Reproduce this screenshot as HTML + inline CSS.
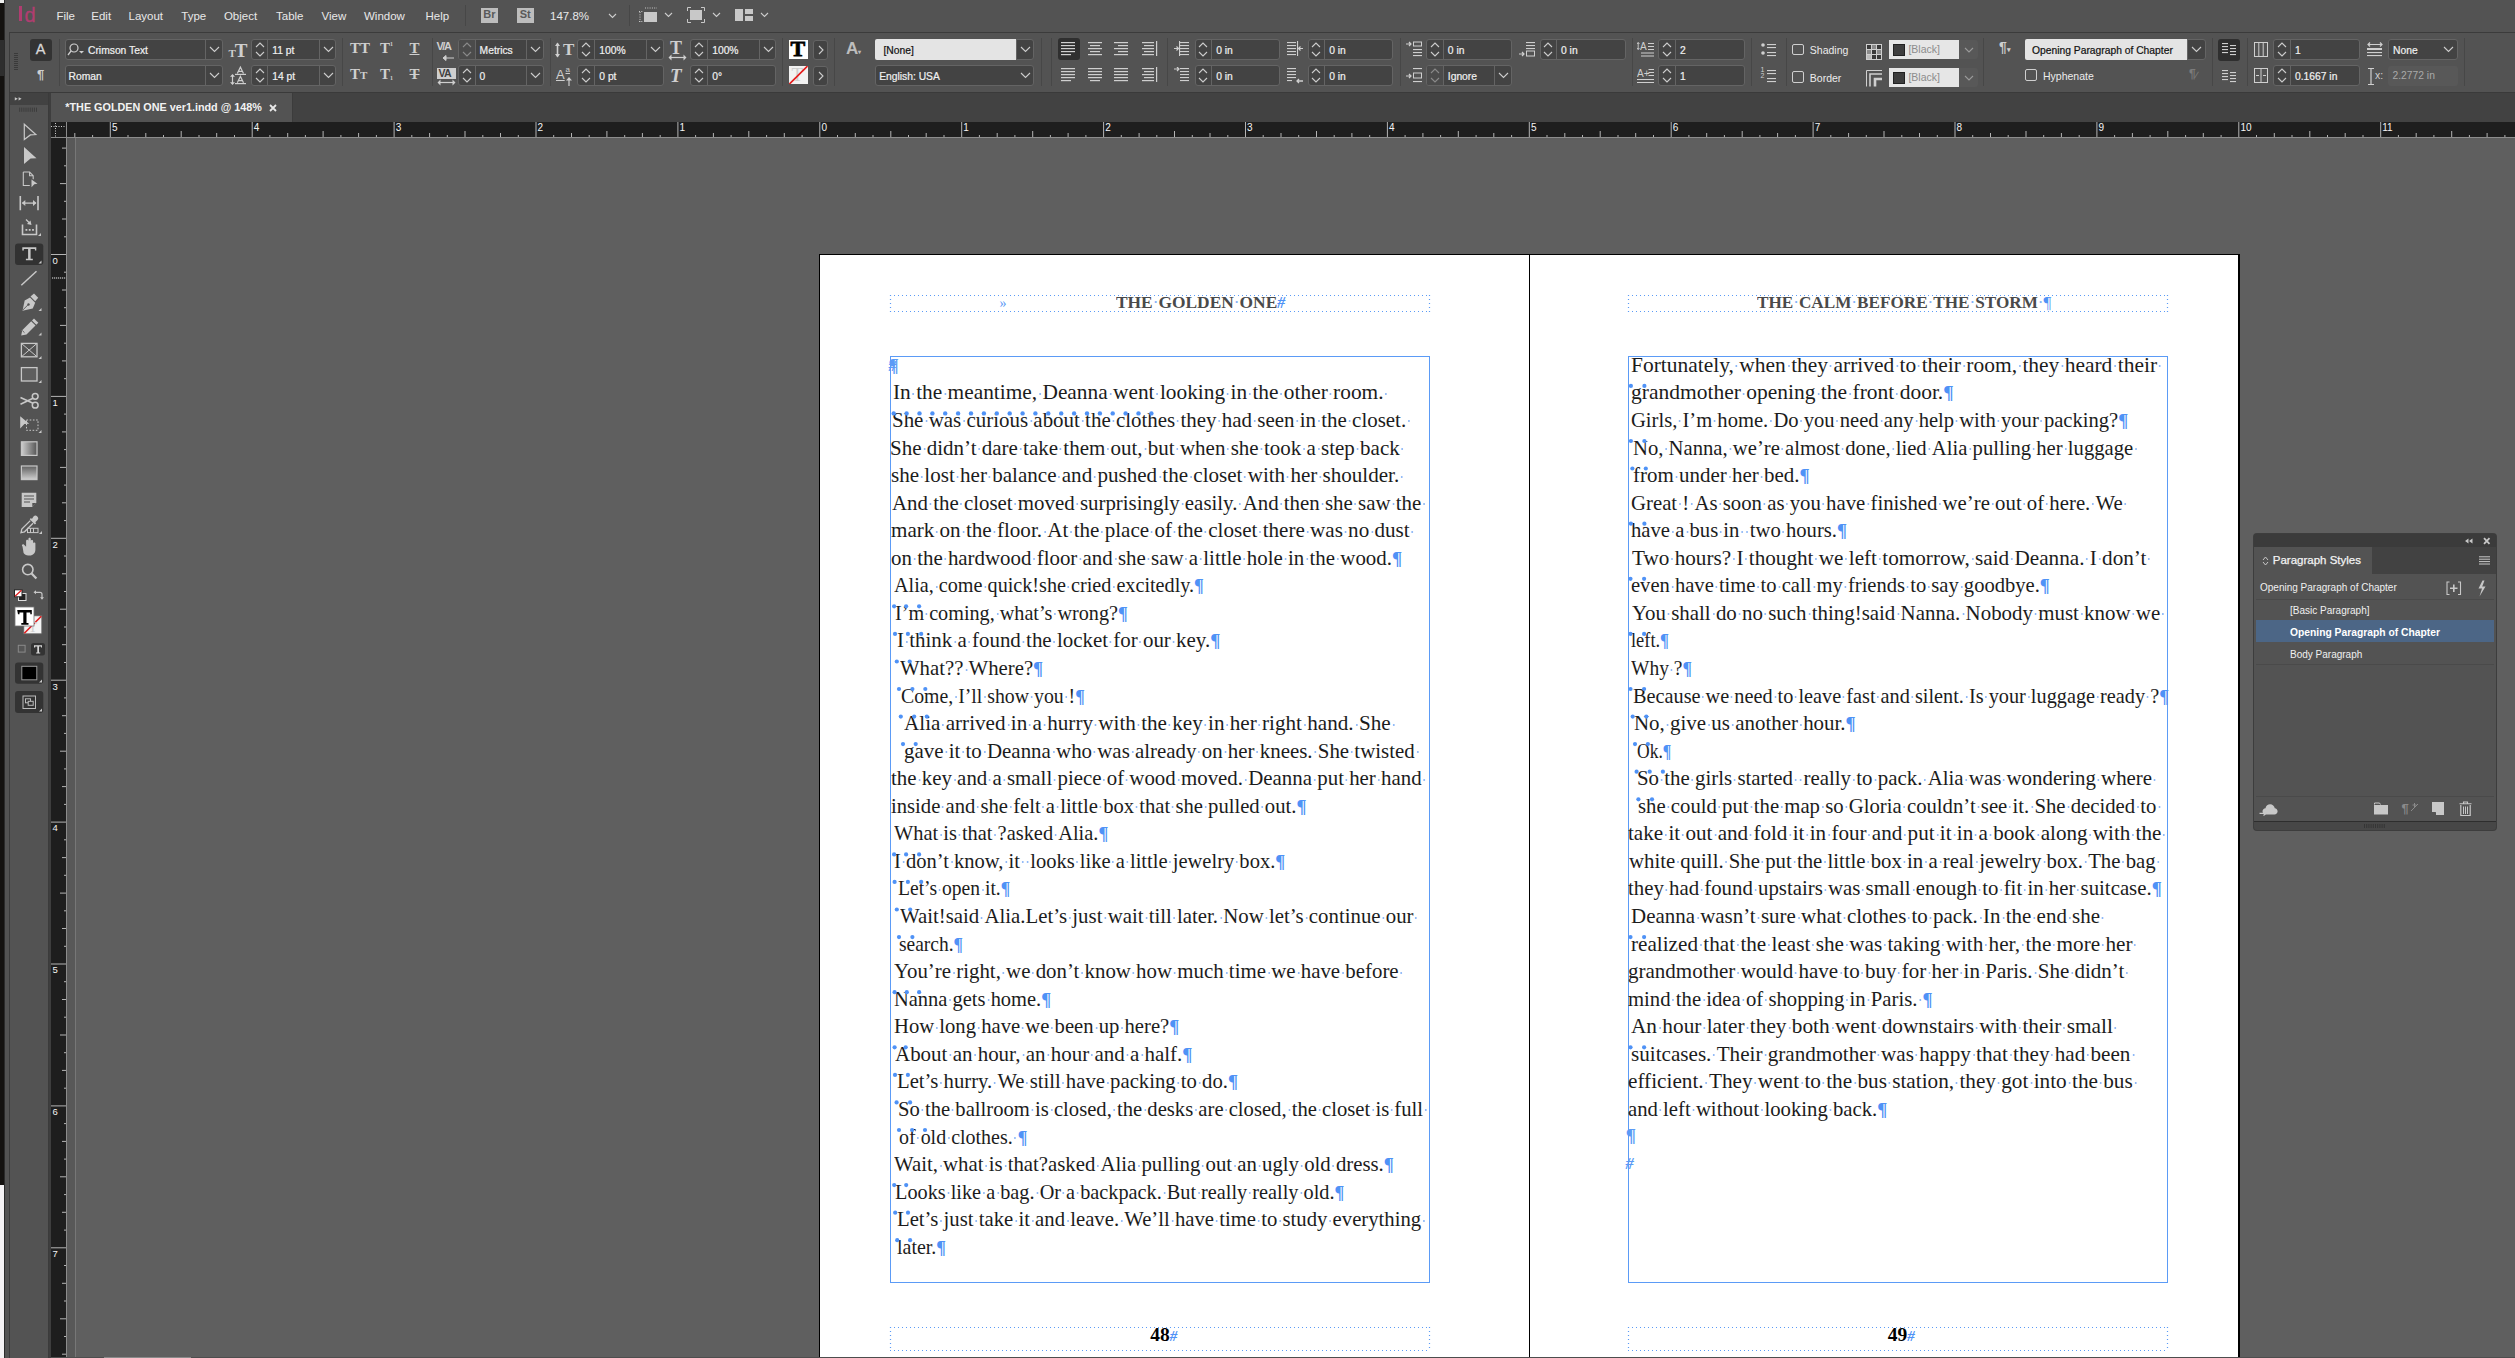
<!DOCTYPE html><html><head><meta charset="utf-8"><style>
*{margin:0;padding:0;box-sizing:border-box}
html,body{width:2515px;height:1358px;overflow:hidden}
body{position:relative;background:#535353;font-family:"Liberation Sans",sans-serif;}
.a{position:absolute}
.t{white-space:pre;line-height:1}
.ln{position:absolute;white-space:pre;font-family:"Liberation Serif",serif;font-size:21.2px;line-height:1;color:#1c1c1c;transform-origin:0 0}
.ln i{font-style:normal;position:relative}
.ln i::after{content:'';position:absolute;left:1.8px;top:12.5px;width:2px;height:2px;background:#86b3f6;border-radius:1px}
.ln b.p{font-weight:bold;color:#4f92f6;font-size:19px}
.hd i{font-style:normal;font-weight:normal;color:#7fb0f7}
.hs{color:#4f92f6;font-style:italic;font-weight:bold;font-size:16px}
.hs2{color:#4f92f6;font-style:italic;font-weight:bold;font-size:15px;vertical-align:0px}
.hp{color:#4f92f6;font-weight:normal}
</style></head><body>
<div class="a" style="left:0px;top:0px;width:5px;height:1358px;background:#141210"></div>
<div class="a" style="left:0px;top:0px;width:6px;height:3px;background:#f0f0f0"></div>
<div class="a" style="left:0px;top:40px;width:4px;height:36px;background:#2e2e2e"></div>
<div class="a" style="left:0px;top:1185px;width:4px;height:173px;background:#f4f2f4"></div>
<div class="a" style="left:4px;top:0px;width:1px;height:1358px;background:#2b2b2b"></div>
<div class="a" style="left:5px;top:0px;width:2510px;height:1358px;background:#535353"></div>
<div class="a" style="left:9px;top:32px;width:2506px;height:60px;background:#535353;border-top:1px solid #3b3b3b;border-left:1px solid #3b3b3b"></div>
<div class="a" style="left:18.9px;top:6px;width:3px;height:15.2px;background:#b03d70"></div>
<div class="a t" style="left:24.6px;top:4.6px;font-size:20px;color:#b03d70;-webkit-text-stroke:0.3px #b03d70">d</div>
<div class="a t" style="left:56.4px;top:10.5px;font-size:11.5px;color:#e8e8e8">File</div>
<div class="a t" style="left:91.3px;top:10.5px;font-size:11.5px;color:#e8e8e8">Edit</div>
<div class="a t" style="left:128.5px;top:10.5px;font-size:11.5px;color:#e8e8e8">Layout</div>
<div class="a t" style="left:181.3px;top:10.5px;font-size:11.5px;color:#e8e8e8">Type</div>
<div class="a t" style="left:223.9px;top:10.5px;font-size:11.5px;color:#e8e8e8">Object</div>
<div class="a t" style="left:276px;top:10.5px;font-size:11.5px;color:#e8e8e8">Table</div>
<div class="a t" style="left:321.5px;top:10.5px;font-size:11.5px;color:#e8e8e8">View</div>
<div class="a t" style="left:364px;top:10.5px;font-size:11.5px;color:#e8e8e8">Window</div>
<div class="a t" style="left:425.5px;top:10.5px;font-size:11.5px;color:#e8e8e8">Help</div>
<div class="a" style="left:464.5px;top:5px;width:1px;height:21px;background:#474747"></div>
<div class="a" style="left:481px;top:7.5px;width:16.5px;height:15.5px;background:#bdbdbd"></div>
<div class="a t" style="left:483.2px;top:9px;font-size:11px;font-weight:bold;color:#5a5a5a">Br</div>
<div class="a" style="left:517px;top:7.5px;width:16.5px;height:15.5px;background:#bdbdbd"></div>
<div class="a t" style="left:519.7px;top:9px;font-size:11px;font-weight:bold;color:#5a5a5a">St</div>
<div class="a t" style="left:550px;top:10.5px;font-size:11.5px;color:#e8e8e8">147.8%</div>
<svg class="a" style="left:608.2px;top:13.25px;" width="9" height="5.5" viewBox="0 0 9 5.5"><polyline points="1,1 4.5,4.5 8,1" fill="none" stroke="#cdcdcd" stroke-width="1.1"/></svg>
<div class="a" style="left:628.5px;top:5px;width:1px;height:21px;background:#474747"></div>
<svg class="a" style="left:638px;top:7px;" width="22" height="16" viewBox="0 0 22 16"><g fill="#c8c8c8"><rect x="6" y="5" width="13" height="10"/></g><g stroke="#c8c8c8" stroke-width="1" stroke-dasharray="1,1.3"><line x1="1" y1="4.5" x2="5" y2="4.5"/><line x1="1" y1="14.5" x2="5" y2="14.5"/><line x1="2" y1="5" x2="2" y2="15"/><line x1="7" y1="1" x2="19" y2="1"/></g></svg>
<svg class="a" style="left:664.3px;top:12.25px;" width="9" height="5.5" viewBox="0 0 9 5.5"><polyline points="1,1 4.5,4.5 8,1" fill="none" stroke="#cdcdcd" stroke-width="1.1"/></svg>
<svg class="a" style="left:687px;top:7px;" width="18" height="16" viewBox="0 0 18 16"><rect x="3" y="3" width="12" height="10" fill="#c8c8c8"/><path d="M0.5 4V0.5H4M14 0.5H17.5V4M17.5 12V15.5H14M4 15.5H0.5V12" fill="none" stroke="#c8c8c8" stroke-width="1"/></svg>
<svg class="a" style="left:711.8px;top:12.25px;" width="9" height="5.5" viewBox="0 0 9 5.5"><polyline points="1,1 4.5,4.5 8,1" fill="none" stroke="#cdcdcd" stroke-width="1.1"/></svg>
<svg class="a" style="left:735px;top:8px;" width="18" height="14" viewBox="0 0 18 14"><rect x="0" y="1" width="8" height="12" fill="#c8c8c8"/><rect x="10" y="1" width="8" height="5" fill="#c8c8c8"/><rect x="10" y="8" width="8" height="5" fill="#c8c8c8"/></svg>
<svg class="a" style="left:759.8px;top:12.25px;" width="9" height="5.5" viewBox="0 0 9 5.5"><polyline points="1,1 4.5,4.5 8,1" fill="none" stroke="#cdcdcd" stroke-width="1.1"/></svg>
<div class="a" style="left:14px;top:53.0px;width:4px;height:1px;background:#3a3a3a"></div>
<div class="a" style="left:14px;top:55.0px;width:4px;height:1px;background:#3a3a3a"></div>
<div class="a" style="left:14px;top:57.0px;width:4px;height:1px;background:#3a3a3a"></div>
<div class="a" style="left:14px;top:59.0px;width:4px;height:1px;background:#3a3a3a"></div>
<div class="a" style="left:14px;top:61.0px;width:4px;height:1px;background:#3a3a3a"></div>
<div class="a" style="left:14px;top:63.0px;width:4px;height:1px;background:#3a3a3a"></div>
<div class="a" style="left:14px;top:65.0px;width:4px;height:1px;background:#3a3a3a"></div>
<div class="a" style="left:14px;top:67.0px;width:4px;height:1px;background:#3a3a3a"></div>
<div class="a" style="left:14px;top:69.0px;width:4px;height:1px;background:#3a3a3a"></div>
<div class="a" style="left:30px;top:39px;width:22px;height:22px;background:#333333;border-radius:3px"></div>
<div class="a t" style="left:35.8px;top:42px;font-size:14.5px;color:#d8d8d8;-webkit-text-stroke:0.3px #d8d8d8">A</div>
<div class="a t" style="left:37px;top:68px;font-size:13px;color:#cfcfcf;font-weight:bold">¶</div>
<div class="a" style="left:58.5px;top:39px;width:1px;height:47px;background:#474747"></div>
<div class="a" style="left:64.6px;top:39.4px;width:158.70000000000002px;height:20.300000000000004px;background:#434343;border:1px solid #646464;border-radius:3px"></div>
<div class="a" style="left:205px;top:39.4px;width:1px;height:20.300000000000004px;background:#646464"></div>
<svg class="a" style="left:209.15px;top:46.3px;" width="11" height="6.5" viewBox="0 0 11 6.5"><polyline points="1,1 5.5,5.5 10,1" fill="none" stroke="#cdcdcd" stroke-width="1.1"/></svg>
<div class="a t" style="left:88px;top:45.8px;font-size:10.3px;color:#f0f0f0;-webkit-text-stroke:0.2px #f0f0f0">Crimson Text</div>
<svg class="a" style="left:67px;top:42px;" width="18" height="16" viewBox="0 0 18 16"><circle cx="7" cy="6" r="4" fill="none" stroke="#cfcfcf" stroke-width="1.2"/><line x1="4" y1="9" x2="1" y2="13" stroke="#cfcfcf" stroke-width="1.3"/><path d="M12 9h5l-2.5 2.5z" fill="#cfcfcf"/></svg>
<div class="a" style="left:64.6px;top:65.3px;width:158.70000000000002px;height:20.5px;background:#434343;border:1px solid #646464;border-radius:3px"></div>
<div class="a" style="left:205px;top:65.3px;width:1px;height:20.5px;background:#646464"></div>
<svg class="a" style="left:209.15px;top:72.3px;" width="11" height="6.5" viewBox="0 0 11 6.5"><polyline points="1,1 5.5,5.5 10,1" fill="none" stroke="#cdcdcd" stroke-width="1.1"/></svg>
<div class="a t" style="left:68.5px;top:71.8px;font-size:10.3px;color:#f0f0f0;-webkit-text-stroke:0.2px #f0f0f0">Roman</div>
<div class="a t" style="left:228.5px;top:40.5px;font-family:'Liberation Serif';font-weight:bold;font-size:19px;color:#cfcfcf;letter-spacing:-1px"><span style="font-size:11px">T</span>T</div>
<div class="a" style="left:250.8px;top:39.4px;width:85.69999999999999px;height:20.300000000000004px;background:#434343;border:1px solid #646464;border-radius:3px"></div>
<div class="a" style="left:267.3px;top:39.4px;width:1px;height:20.300000000000004px;background:#646464"></div>
<svg class="a" style="left:254.55px;top:42.49px;" width="10" height="6.0" viewBox="0 0 10 6.0"><polyline points="1,5.0 5.0,1 9,5.0" fill="none" stroke="#cdcdcd" stroke-width="1.1"/></svg>
<svg class="a" style="left:254.55px;top:51.016000000000005px;" width="10" height="6.0" viewBox="0 0 10 6.0"><polyline points="1,1 5.0,5.0 9,1" fill="none" stroke="#cdcdcd" stroke-width="1.1"/></svg>
<div class="a" style="left:318.7px;top:39.4px;width:1px;height:20.300000000000004px;background:#646464"></div>
<svg class="a" style="left:322.6px;top:46.3px;" width="11" height="6.5" viewBox="0 0 11 6.5"><polyline points="1,1 5.5,5.5 10,1" fill="none" stroke="#cdcdcd" stroke-width="1.1"/></svg>
<div class="a t" style="left:272.3px;top:45.8px;font-size:10.3px;color:#f0f0f0;-webkit-text-stroke:0.2px #f0f0f0">11 pt</div>
<svg class="a" style="left:228px;top:64px;" width="22" height="24" viewBox="0 0 22 24"><g stroke="#cfcfcf" fill="none" stroke-width="1.2"><path d="M4.5 11.5v8"/><path d="M9.3 9.4L12.4 3.2L15.5 9.4M10.4 7.3h4"/><path d="M7 10.4h11"/><path d="M9.3 18.8L12.4 12.4L15.5 18.8M10.4 16.6h4"/><path d="M7 19.6h11"/></g><path d="M2 12.7L4.5 10L7 12.7zM2 18.3L4.5 21L7 18.3z" fill="#cfcfcf"/></svg>
<div class="a" style="left:250.8px;top:65.3px;width:85.69999999999999px;height:20.5px;background:#434343;border:1px solid #646464;border-radius:3px"></div>
<div class="a" style="left:267.3px;top:65.3px;width:1px;height:20.5px;background:#646464"></div>
<svg class="a" style="left:254.55px;top:68.45px;" width="10" height="6.0" viewBox="0 0 10 6.0"><polyline points="1,5.0 5.0,1 9,5.0" fill="none" stroke="#cdcdcd" stroke-width="1.1"/></svg>
<svg class="a" style="left:254.55px;top:77.06px;" width="10" height="6.0" viewBox="0 0 10 6.0"><polyline points="1,1 5.0,5.0 9,1" fill="none" stroke="#cdcdcd" stroke-width="1.1"/></svg>
<div class="a" style="left:318.7px;top:65.3px;width:1px;height:20.5px;background:#646464"></div>
<svg class="a" style="left:322.6px;top:72.3px;" width="11" height="6.5" viewBox="0 0 11 6.5"><polyline points="1,1 5.5,5.5 10,1" fill="none" stroke="#cdcdcd" stroke-width="1.1"/></svg>
<div class="a t" style="left:272.3px;top:71.8px;font-size:10.3px;color:#f0f0f0;-webkit-text-stroke:0.2px #f0f0f0">14 pt</div>
<div class="a" style="left:342.3px;top:38px;width:1px;height:48px;background:#474747"></div>
<div class="a t" style="left:350px;top:41px;font-family:'Liberation Serif';font-size:15px;font-weight:bold;color:#cfcfcf">TT</div>
<div class="a t" style="left:380px;top:41px;font-family:'Liberation Serif';font-size:15px;font-weight:bold;color:#cfcfcf">T<sup style="font-size:6px;vertical-align:7px">1</sup></div>
<div class="a t" style="left:409.5px;top:41px;font-family:'Liberation Serif';font-size:15px;font-weight:bold;color:#cfcfcf"><u>T</u></div>
<div class="a t" style="left:350px;top:67px;font-family:'Liberation Serif';font-size:15px;font-weight:bold;color:#cfcfcf">T<span style="font-size:11px">T</span></div>
<div class="a t" style="left:380px;top:67px;font-family:'Liberation Serif';font-size:15px;font-weight:bold;color:#cfcfcf">T<sub style="font-size:6px;vertical-align:-1px">1</sub></div>
<div class="a t" style="left:409.5px;top:67px;font-family:'Liberation Serif';font-size:15px;font-weight:bold;color:#cfcfcf"><s>T</s></div>
<div class="a" style="left:431.6px;top:38px;width:1px;height:48px;background:#474747"></div>
<div class="a t" style="left:436.5px;top:41px;font-size:11px;color:#cfcfcf;letter-spacing:-1.5px;font-weight:bold">V/A</div>
<svg class="a" style="left:443px;top:55px;" width="12" height="6" viewBox="0 0 12 6"><path d="M0 3l3-2.5v5z M2 3h9" fill="#cfcfcf" stroke="#cfcfcf" stroke-width="1"/></svg>
<div class="a" style="left:458.2px;top:39.4px;width:86.30000000000001px;height:20.300000000000004px;background:#434343;border:1px solid #646464;border-radius:3px"></div>
<div class="a" style="left:459.2px;top:40.4px;width:15.400000000000034px;height:18.300000000000004px;background:#4b4b4b;border-radius:2px 0 0 2px"></div>
<div class="a" style="left:474.6px;top:39.4px;width:1px;height:20.300000000000004px;background:#646464"></div>
<svg class="a" style="left:461.9px;top:42.49px;" width="10" height="6.0" viewBox="0 0 10 6.0"><polyline points="1,5.0 5.0,1 9,5.0" fill="none" stroke="#8a8a8a" stroke-width="1.1"/></svg>
<svg class="a" style="left:461.9px;top:51.016000000000005px;" width="10" height="6.0" viewBox="0 0 10 6.0"><polyline points="1,1 5.0,5.0 9,1" fill="none" stroke="#8a8a8a" stroke-width="1.1"/></svg>
<div class="a" style="left:526px;top:39.4px;width:1px;height:20.300000000000004px;background:#646464"></div>
<svg class="a" style="left:530.25px;top:46.3px;" width="11" height="6.5" viewBox="0 0 11 6.5"><polyline points="1,1 5.5,5.5 10,1" fill="none" stroke="#cdcdcd" stroke-width="1.1"/></svg>
<div class="a t" style="left:479.6px;top:45.8px;font-size:10.3px;color:#f0f0f0;-webkit-text-stroke:0.2px #f0f0f0">Metrics</div>
<div class="a" style="left:437px;top:68px;width:19px;height:11px;background:#cfcfcf"></div>
<div class="a t" style="left:438.5px;top:67.5px;font-size:10.5px;color:#3f3f3f;font-weight:bold;letter-spacing:-0.8px">VA</div>
<svg class="a" style="left:437px;top:79px;" width="19" height="7" viewBox="0 0 19 7"><path d="M0.5 3.5l3-3v6z M18.5 3.5l-3-3v6z" fill="#cfcfcf"/><line x1="2" y1="3.5" x2="17" y2="3.5" stroke="#cfcfcf" stroke-width="1.2"/></svg>
<div class="a" style="left:458.2px;top:65.3px;width:86.30000000000001px;height:20.5px;background:#434343;border:1px solid #646464;border-radius:3px"></div>
<div class="a" style="left:474.6px;top:65.3px;width:1px;height:20.5px;background:#646464"></div>
<svg class="a" style="left:461.9px;top:68.45px;" width="10" height="6.0" viewBox="0 0 10 6.0"><polyline points="1,5.0 5.0,1 9,5.0" fill="none" stroke="#cdcdcd" stroke-width="1.1"/></svg>
<svg class="a" style="left:461.9px;top:77.06px;" width="10" height="6.0" viewBox="0 0 10 6.0"><polyline points="1,1 5.0,5.0 9,1" fill="none" stroke="#cdcdcd" stroke-width="1.1"/></svg>
<div class="a" style="left:526px;top:65.3px;width:1px;height:20.5px;background:#646464"></div>
<svg class="a" style="left:530.25px;top:72.3px;" width="11" height="6.5" viewBox="0 0 11 6.5"><polyline points="1,1 5.5,5.5 10,1" fill="none" stroke="#cdcdcd" stroke-width="1.1"/></svg>
<div class="a t" style="left:479.6px;top:71.8px;font-size:10.3px;color:#f0f0f0;-webkit-text-stroke:0.2px #f0f0f0">0</div>
<div class="a" style="left:550.2px;top:38px;width:1px;height:48px;background:#474747"></div>
<svg class="a" style="left:555px;top:42px;" width="20" height="17" viewBox="0 0 20 17"><path d="M2.5 1.5v13" stroke="#cfcfcf" stroke-width="1.6"/><path d="M0 4l2.5-3.5L5 4zM0 12l2.5 3.5L5 12z" fill="#cfcfcf"/></svg>
<div class="a t" style="left:563px;top:40.5px;font-family:'Liberation Serif';font-weight:bold;font-size:17px;color:#cfcfcf">T</div>
<div class="a" style="left:577.4px;top:39.4px;width:86.30000000000007px;height:20.300000000000004px;background:#434343;border:1px solid #646464;border-radius:3px"></div>
<div class="a" style="left:594.3px;top:39.4px;width:1px;height:20.300000000000004px;background:#646464"></div>
<svg class="a" style="left:581.3499999999999px;top:42.49px;" width="10" height="6.0" viewBox="0 0 10 6.0"><polyline points="1,5.0 5.0,1 9,5.0" fill="none" stroke="#cdcdcd" stroke-width="1.1"/></svg>
<svg class="a" style="left:581.3499999999999px;top:51.016000000000005px;" width="10" height="6.0" viewBox="0 0 10 6.0"><polyline points="1,1 5.0,5.0 9,1" fill="none" stroke="#cdcdcd" stroke-width="1.1"/></svg>
<div class="a" style="left:645.7px;top:39.4px;width:1px;height:20.300000000000004px;background:#646464"></div>
<svg class="a" style="left:649.7px;top:46.3px;" width="11" height="6.5" viewBox="0 0 11 6.5"><polyline points="1,1 5.5,5.5 10,1" fill="none" stroke="#cdcdcd" stroke-width="1.1"/></svg>
<div class="a t" style="left:599.3px;top:45.8px;font-size:10.3px;color:#f0f0f0;-webkit-text-stroke:0.2px #f0f0f0">100%</div>
<div class="a t" style="left:556px;top:67.5px;font-size:13px;color:#cfcfcf"><u>A</u></div>
<div class="a t" style="left:565.5px;top:66px;font-size:8px;color:#cfcfcf"><u>a</u></div>
<svg class="a" style="left:565px;top:76px;" width="8" height="10" viewBox="0 0 8 10"><path d="M4 2v8" stroke="#cfcfcf" stroke-width="1.2"/><path d="M1 4.5l3-3.5 3 3.5z" fill="#cfcfcf"/></svg>
<div class="a" style="left:577.4px;top:65.3px;width:86.30000000000007px;height:20.5px;background:#434343;border:1px solid #646464;border-radius:3px"></div>
<div class="a" style="left:594.3px;top:65.3px;width:1px;height:20.5px;background:#646464"></div>
<svg class="a" style="left:581.3499999999999px;top:68.45px;" width="10" height="6.0" viewBox="0 0 10 6.0"><polyline points="1,5.0 5.0,1 9,5.0" fill="none" stroke="#cdcdcd" stroke-width="1.1"/></svg>
<svg class="a" style="left:581.3499999999999px;top:77.06px;" width="10" height="6.0" viewBox="0 0 10 6.0"><polyline points="1,1 5.0,5.0 9,1" fill="none" stroke="#cdcdcd" stroke-width="1.1"/></svg>
<div class="a t" style="left:599.3px;top:71.8px;font-size:10.3px;color:#f0f0f0;-webkit-text-stroke:0.2px #f0f0f0">0 pt</div>
<div class="a t" style="left:670px;top:39px;font-family:'Liberation Serif';font-size:18px;color:#cfcfcf;font-weight:bold">T</div>
<svg class="a" style="left:668px;top:54px;" width="19" height="7" viewBox="0 0 19 7"><path d="M0.5 3.5l3-3v6z M18.5 3.5l-3-3v6z" fill="#cfcfcf"/><line x1="2" y1="3.5" x2="17" y2="3.5" stroke="#cfcfcf" stroke-width="1.2"/></svg>
<div class="a" style="left:690.3px;top:39.4px;width:86.10000000000002px;height:20.300000000000004px;background:#434343;border:1px solid #646464;border-radius:3px"></div>
<div class="a" style="left:707.2px;top:39.4px;width:1px;height:20.300000000000004px;background:#646464"></div>
<svg class="a" style="left:694.25px;top:42.49px;" width="10" height="6.0" viewBox="0 0 10 6.0"><polyline points="1,5.0 5.0,1 9,5.0" fill="none" stroke="#cdcdcd" stroke-width="1.1"/></svg>
<svg class="a" style="left:694.25px;top:51.016000000000005px;" width="10" height="6.0" viewBox="0 0 10 6.0"><polyline points="1,1 5.0,5.0 9,1" fill="none" stroke="#cdcdcd" stroke-width="1.1"/></svg>
<div class="a" style="left:758.6px;top:39.4px;width:1px;height:20.300000000000004px;background:#646464"></div>
<svg class="a" style="left:762.5px;top:46.3px;" width="11" height="6.5" viewBox="0 0 11 6.5"><polyline points="1,1 5.5,5.5 10,1" fill="none" stroke="#cdcdcd" stroke-width="1.1"/></svg>
<div class="a t" style="left:712.2px;top:45.8px;font-size:10.3px;color:#f0f0f0;-webkit-text-stroke:0.2px #f0f0f0">100%</div>
<div class="a t" style="left:670px;top:66px;font-family:'Liberation Serif';font-size:19px;color:#cfcfcf;font-weight:bold"><i>T</i></div>
<div class="a" style="left:690.3px;top:65.3px;width:86.10000000000002px;height:20.5px;background:#434343;border:1px solid #646464;border-radius:3px"></div>
<div class="a" style="left:707.2px;top:65.3px;width:1px;height:20.5px;background:#646464"></div>
<svg class="a" style="left:694.25px;top:68.45px;" width="10" height="6.0" viewBox="0 0 10 6.0"><polyline points="1,5.0 5.0,1 9,5.0" fill="none" stroke="#cdcdcd" stroke-width="1.1"/></svg>
<svg class="a" style="left:694.25px;top:77.06px;" width="10" height="6.0" viewBox="0 0 10 6.0"><polyline points="1,1 5.0,5.0 9,1" fill="none" stroke="#cdcdcd" stroke-width="1.1"/></svg>
<div class="a t" style="left:712.2px;top:71.8px;font-size:10.3px;color:#f0f0f0;-webkit-text-stroke:0.2px #f0f0f0">0°</div>
<div class="a" style="left:782.3px;top:38px;width:1px;height:48px;background:#474747"></div>
<div class="a" style="left:789px;top:39.8px;width:19px;height:19.5px;background:#fff"></div>
<div class="a t" style="left:790.5px;top:37.5px;font-family:'Liberation Serif';font-size:22px;font-weight:bold;color:#000;-webkit-text-stroke:0.8px #000">T</div>
<div class="a" style="left:812.7px;top:39.5px;width:15.5px;height:20px;background:#434343;border:1px solid #646464;border-radius:3px"></div>
<svg class="a" style="left:817.8px;top:44.5px;" width="6.0" height="10" viewBox="0 0 6.0 10"><polyline points="1,1 5.0,5.0 1,9" fill="none" stroke="#cdcdcd" stroke-width="1.1"/></svg>
<div class="a" style="left:789px;top:65.8px;width:18.5px;height:18.5px;background:#f2f2f2"></div>
<div class="a t" style="left:791.5px;top:64.5px;font-family:'Liberation Serif';font-size:19px;color:#cfcfcf">T</div>
<svg class="a" style="left:789px;top:65.8px;" width="18.5" height="18.5" viewBox="0 0 18.5 18.5"><line x1="0" y1="18.5" x2="18.5" y2="0" stroke="#e41b1b" stroke-width="1.6"/></svg>
<div class="a" style="left:812.7px;top:65.5px;width:15.5px;height:20px;background:#434343;border:1px solid #646464;border-radius:3px"></div>
<svg class="a" style="left:817.8px;top:70.5px;" width="6.0" height="10" viewBox="0 0 6.0 10"><polyline points="1,1 5.0,5.0 1,9" fill="none" stroke="#cdcdcd" stroke-width="1.1"/></svg>
<div class="a" style="left:834.3px;top:38px;width:1px;height:48px;background:#474747"></div>
<div class="a t" style="left:846px;top:40px;font-size:17px;font-weight:bold;color:#bdbdbd">A<span style="font-size:6px">▾</span></div>
<div class="a" style="left:875.4px;top:39.4px;width:158.89999999999998px;height:20.300000000000004px;background:#434343;border:1px solid #646464;border-radius:3px"></div>
<div class="a" style="left:875.4px;top:39.4px;width:140.60000000000002px;height:20.300000000000004px;background:#e4e4e4;border-radius:2px 0 0 2px"></div>
<div class="a" style="left:1016px;top:39.4px;width:1px;height:20.300000000000004px;background:#646464"></div>
<svg class="a" style="left:1020.1500000000001px;top:46.3px;" width="11" height="6.5" viewBox="0 0 11 6.5"><polyline points="1,1 5.5,5.5 10,1" fill="none" stroke="#cdcdcd" stroke-width="1.1"/></svg>
<div class="a t" style="left:883.5px;top:45.8px;font-size:10.3px;color:#111;-webkit-text-stroke:0.2px #111">[None]</div>
<div class="a" style="left:875.4px;top:65.3px;width:158.89999999999998px;height:20.5px;background:#434343;border:1px solid #646464;border-radius:3px"></div>
<div class="a t" style="left:879.2px;top:71.8px;font-size:10.3px;color:#f0f0f0;-webkit-text-stroke:0.2px #f0f0f0">English: USA</div>
<svg class="a" style="left:1020.0px;top:72.25px;" width="11" height="6.5" viewBox="0 0 11 6.5"><polyline points="1,1 5.5,5.5 10,1" fill="none" stroke="#cdcdcd" stroke-width="1.1"/></svg>
<div class="a" style="left:1040.6px;top:38px;width:1px;height:48px;background:#474747"></div>
<div class="a" style="left:1051.4px;top:38px;width:1px;height:48px;background:#474747"></div>
<div class="a" style="left:1058px;top:38.2px;width:21.5px;height:21.5px;background:#2f2f2f;border-radius:3px"></div>
<svg class="a" style="left:1060.7px;top:41px;" width="16" height="16" viewBox="0 0 16 16"><rect x="0" y="1" width="14" height="1.2" fill="#cfcfcf"/><rect x="0" y="4" width="14" height="1.2" fill="#cfcfcf"/><rect x="0" y="7" width="14" height="1.2" fill="#cfcfcf"/><rect x="0" y="10" width="14" height="1.2" fill="#cfcfcf"/><rect x="0" y="13" width="10" height="1.2" fill="#cfcfcf"/></svg>
<svg class="a" style="left:1087.8px;top:41px;" width="16" height="16" viewBox="0 0 16 16"><rect x="0.0" y="1" width="14" height="1.2" fill="#cfcfcf"/><rect x="2.0" y="4" width="10" height="1.2" fill="#cfcfcf"/><rect x="0.0" y="7" width="14" height="1.2" fill="#cfcfcf"/><rect x="2.0" y="10" width="10" height="1.2" fill="#cfcfcf"/><rect x="0.0" y="13" width="14" height="1.2" fill="#cfcfcf"/></svg>
<svg class="a" style="left:1114.1px;top:41px;" width="16" height="16" viewBox="0 0 16 16"><rect x="0" y="1" width="14" height="1.2" fill="#cfcfcf"/><rect x="4" y="4" width="10" height="1.2" fill="#cfcfcf"/><rect x="0" y="7" width="14" height="1.2" fill="#cfcfcf"/><rect x="4" y="10" width="10" height="1.2" fill="#cfcfcf"/><rect x="0" y="13" width="14" height="1.2" fill="#cfcfcf"/></svg>
<svg class="a" style="left:1141.8px;top:41px;" width="16" height="16" viewBox="0 0 16 16"><rect x="0" y="1" width="12" height="1.2" fill="#cfcfcf"/><rect x="2" y="4" width="10" height="1.2" fill="#cfcfcf"/><rect x="0" y="7" width="12" height="1.2" fill="#cfcfcf"/><rect x="2" y="10" width="10" height="1.2" fill="#cfcfcf"/><rect x="0" y="13" width="12" height="1.2" fill="#cfcfcf"/><rect x="14" y="0" width="1.2" height="15" fill="#cfcfcf"/></svg>
<svg class="a" style="left:1060.7px;top:67px;" width="16" height="16" viewBox="0 0 16 16"><rect x="0" y="1" width="14" height="1.2" fill="#cfcfcf"/><rect x="0" y="4" width="14" height="1.2" fill="#cfcfcf"/><rect x="0" y="7" width="14" height="1.2" fill="#cfcfcf"/><rect x="0" y="10" width="14" height="1.2" fill="#cfcfcf"/><rect x="0" y="13" width="10" height="1.2" fill="#cfcfcf"/></svg>
<svg class="a" style="left:1087.8px;top:67px;" width="16" height="16" viewBox="0 0 16 16"><rect x="0.0" y="1" width="14" height="1.2" fill="#cfcfcf"/><rect x="0.0" y="4" width="14" height="1.2" fill="#cfcfcf"/><rect x="0.0" y="7" width="14" height="1.2" fill="#cfcfcf"/><rect x="0.0" y="10" width="14" height="1.2" fill="#cfcfcf"/><rect x="2" y="13" width="10" height="1.2" fill="#cfcfcf"/></svg>
<svg class="a" style="left:1114.1px;top:67px;" width="16" height="16" viewBox="0 0 16 16"><rect x="0" y="1" width="14" height="1.2" fill="#cfcfcf"/><rect x="0" y="4" width="14" height="1.2" fill="#cfcfcf"/><rect x="0" y="7" width="14" height="1.2" fill="#cfcfcf"/><rect x="0" y="10" width="14" height="1.2" fill="#cfcfcf"/><rect x="0" y="13" width="14" height="1.2" fill="#cfcfcf"/></svg>
<svg class="a" style="left:1141.8px;top:67px;" width="16" height="16" viewBox="0 0 16 16"><rect x="0" y="1" width="12" height="1.2" fill="#cfcfcf"/><rect x="2" y="4" width="10" height="1.2" fill="#cfcfcf"/><rect x="0" y="7" width="12" height="1.2" fill="#cfcfcf"/><rect x="2" y="10" width="10" height="1.2" fill="#cfcfcf"/><rect x="0" y="13" width="12" height="1.2" fill="#cfcfcf"/><rect x="14" y="0" width="1.2" height="15" fill="#cfcfcf"/></svg>
<div class="a" style="left:1167.4px;top:38px;width:1px;height:48px;background:#474747"></div>
<svg class="a" style="left:1173.5px;top:41px;" width="17" height="16" viewBox="0 0 17 16"><rect x="6" y="1" width="9" height="1.1" fill="#cfcfcf"/><rect x="6" y="4" width="9" height="1.1" fill="#cfcfcf"/><rect x="6" y="7" width="9" height="1.1" fill="#cfcfcf"/><rect x="6" y="10" width="9" height="1.1" fill="#cfcfcf"/><rect x="6" y="13" width="9" height="1.1" fill="#cfcfcf"/><rect x="5" y="0" width="1.1" height="15" fill="#cfcfcf"/><path d="M0 7.5h4M2.5 5.5l2 2-2 2" stroke="#cfcfcf" fill="none" stroke-width="1.2"/></svg>
<div class="a" style="left:1194.7px;top:39.4px;width:85.59999999999991px;height:20.300000000000004px;background:#434343;border:1px solid #646464;border-radius:3px"></div>
<div class="a" style="left:1211.2px;top:39.4px;width:1px;height:20.300000000000004px;background:#646464"></div>
<svg class="a" style="left:1198.45px;top:42.49px;" width="10" height="6.0" viewBox="0 0 10 6.0"><polyline points="1,5.0 5.0,1 9,5.0" fill="none" stroke="#cdcdcd" stroke-width="1.1"/></svg>
<svg class="a" style="left:1198.45px;top:51.016000000000005px;" width="10" height="6.0" viewBox="0 0 10 6.0"><polyline points="1,1 5.0,5.0 9,1" fill="none" stroke="#cdcdcd" stroke-width="1.1"/></svg>
<div class="a t" style="left:1216.2px;top:45.8px;font-size:10.3px;color:#f0f0f0;-webkit-text-stroke:0.2px #f0f0f0">0 in</div>
<svg class="a" style="left:1173.5px;top:67px;" width="17" height="16" viewBox="0 0 17 16"><rect x="6" y="1" width="9" height="1.1" fill="#cfcfcf"/><rect x="6" y="4" width="9" height="1.1" fill="#cfcfcf"/><rect x="6" y="7" width="9" height="1.1" fill="#cfcfcf"/><rect x="6" y="10" width="9" height="1.1" fill="#cfcfcf"/><rect x="6" y="13" width="9" height="1.1" fill="#cfcfcf"/><path d="M0 2h5M3 0l2 2-2 2" stroke="#cfcfcf" fill="none" stroke-width="1.2"/></svg>
<div class="a" style="left:1194.7px;top:65.3px;width:85.59999999999991px;height:20.5px;background:#434343;border:1px solid #646464;border-radius:3px"></div>
<div class="a" style="left:1211.2px;top:65.3px;width:1px;height:20.5px;background:#646464"></div>
<svg class="a" style="left:1198.45px;top:68.45px;" width="10" height="6.0" viewBox="0 0 10 6.0"><polyline points="1,5.0 5.0,1 9,5.0" fill="none" stroke="#cdcdcd" stroke-width="1.1"/></svg>
<svg class="a" style="left:1198.45px;top:77.06px;" width="10" height="6.0" viewBox="0 0 10 6.0"><polyline points="1,1 5.0,5.0 9,1" fill="none" stroke="#cdcdcd" stroke-width="1.1"/></svg>
<div class="a t" style="left:1216.2px;top:71.8px;font-size:10.3px;color:#f0f0f0;-webkit-text-stroke:0.2px #f0f0f0">0 in</div>
<svg class="a" style="left:1286.7px;top:41px;" width="17" height="16" viewBox="0 0 17 16"><rect x="0" y="1" width="9" height="1.1" fill="#cfcfcf"/><rect x="0" y="4" width="9" height="1.1" fill="#cfcfcf"/><rect x="0" y="7" width="9" height="1.1" fill="#cfcfcf"/><rect x="0" y="10" width="9" height="1.1" fill="#cfcfcf"/><rect x="0" y="13" width="9" height="1.1" fill="#cfcfcf"/><rect x="10" y="0" width="1.1" height="15" fill="#cfcfcf"/><path d="M16 7.5h-4M13.5 5.5l-2 2 2 2" stroke="#cfcfcf" fill="none" stroke-width="1.2"/></svg>
<div class="a" style="left:1307.6px;top:39.4px;width:85.90000000000009px;height:20.300000000000004px;background:#434343;border:1px solid #646464;border-radius:3px"></div>
<div class="a" style="left:1324.2px;top:39.4px;width:1px;height:20.300000000000004px;background:#646464"></div>
<svg class="a" style="left:1311.4px;top:42.49px;" width="10" height="6.0" viewBox="0 0 10 6.0"><polyline points="1,5.0 5.0,1 9,5.0" fill="none" stroke="#cdcdcd" stroke-width="1.1"/></svg>
<svg class="a" style="left:1311.4px;top:51.016000000000005px;" width="10" height="6.0" viewBox="0 0 10 6.0"><polyline points="1,1 5.0,5.0 9,1" fill="none" stroke="#cdcdcd" stroke-width="1.1"/></svg>
<div class="a t" style="left:1329.2px;top:45.8px;font-size:10.3px;color:#f0f0f0;-webkit-text-stroke:0.2px #f0f0f0">0 in</div>
<svg class="a" style="left:1286.7px;top:67px;" width="17" height="18" viewBox="0 0 17 18"><rect x="0" y="1" width="9" height="1.1" fill="#cfcfcf"/><rect x="0" y="4" width="9" height="1.1" fill="#cfcfcf"/><rect x="0" y="7" width="9" height="1.1" fill="#cfcfcf"/><rect x="0" y="10" width="9" height="1.1" fill="#cfcfcf"/><rect x="0" y="13" width="5" height="1.1" fill="#cfcfcf"/><path d="M16 14h-6M12 12l-2 2 2 2" stroke="#cfcfcf" fill="none" stroke-width="1.3"/></svg>
<div class="a" style="left:1307.6px;top:65.3px;width:85.90000000000009px;height:20.5px;background:#434343;border:1px solid #646464;border-radius:3px"></div>
<div class="a" style="left:1324.2px;top:65.3px;width:1px;height:20.5px;background:#646464"></div>
<svg class="a" style="left:1311.4px;top:68.45px;" width="10" height="6.0" viewBox="0 0 10 6.0"><polyline points="1,5.0 5.0,1 9,5.0" fill="none" stroke="#cdcdcd" stroke-width="1.1"/></svg>
<svg class="a" style="left:1311.4px;top:77.06px;" width="10" height="6.0" viewBox="0 0 10 6.0"><polyline points="1,1 5.0,5.0 9,1" fill="none" stroke="#cdcdcd" stroke-width="1.1"/></svg>
<div class="a t" style="left:1329.2px;top:71.8px;font-size:10.3px;color:#f0f0f0;-webkit-text-stroke:0.2px #f0f0f0">0 in</div>
<div class="a" style="left:1399.5px;top:38px;width:1px;height:48px;background:#474747"></div>
<svg class="a" style="left:1405.5px;top:41px;" width="17" height="16" viewBox="0 0 17 16"><path d="M0 3h5M3 1l2 2-2 2" stroke="#cfcfcf" fill="none" stroke-width="1.2"/><rect x="7.5" y="1" width="8" height="4" fill="none" stroke="#cfcfcf"/><rect x="7" y="8" width="9" height="1.1" fill="#cfcfcf"/><rect x="7" y="11" width="9" height="1.1" fill="#cfcfcf"/><rect x="7" y="14" width="9" height="1.1" fill="#cfcfcf"/></svg>
<div class="a" style="left:1426.3px;top:39.4px;width:86.10000000000014px;height:20.300000000000004px;background:#434343;border:1px solid #646464;border-radius:3px"></div>
<div class="a" style="left:1442.8px;top:39.4px;width:1px;height:20.300000000000004px;background:#646464"></div>
<svg class="a" style="left:1430.05px;top:42.49px;" width="10" height="6.0" viewBox="0 0 10 6.0"><polyline points="1,5.0 5.0,1 9,5.0" fill="none" stroke="#cdcdcd" stroke-width="1.1"/></svg>
<svg class="a" style="left:1430.05px;top:51.016000000000005px;" width="10" height="6.0" viewBox="0 0 10 6.0"><polyline points="1,1 5.0,5.0 9,1" fill="none" stroke="#cdcdcd" stroke-width="1.1"/></svg>
<div class="a t" style="left:1447.8px;top:45.8px;font-size:10.3px;color:#f0f0f0;-webkit-text-stroke:0.2px #f0f0f0">0 in</div>
<svg class="a" style="left:1405.5px;top:67px;" width="17" height="17" viewBox="0 0 17 17"><path d="M0 9h5M3 7l2 2-2 2" stroke="#cfcfcf" fill="none" stroke-width="1.2"/><rect x="7" y="1" width="9" height="1.1" fill="#cfcfcf"/><rect x="7.5" y="6" width="8" height="5" fill="none" stroke="#cfcfcf"/><rect x="7" y="14" width="9" height="1.1" fill="#cfcfcf"/></svg>
<div class="a" style="left:1426.3px;top:65.3px;width:86.10000000000014px;height:20.5px;background:#434343;border:1px solid #646464;border-radius:3px"></div>
<div class="a" style="left:1427.3px;top:66.3px;width:15.5px;height:18.5px;background:#4b4b4b;border-radius:2px 0 0 2px"></div>
<div class="a" style="left:1442.8px;top:65.3px;width:1px;height:20.5px;background:#646464"></div>
<svg class="a" style="left:1430.05px;top:68.45px;" width="10" height="6.0" viewBox="0 0 10 6.0"><polyline points="1,5.0 5.0,1 9,5.0" fill="none" stroke="#8a8a8a" stroke-width="1.1"/></svg>
<svg class="a" style="left:1430.05px;top:77.06px;" width="10" height="6.0" viewBox="0 0 10 6.0"><polyline points="1,1 5.0,5.0 9,1" fill="none" stroke="#8a8a8a" stroke-width="1.1"/></svg>
<div class="a" style="left:1494.4px;top:65.3px;width:1px;height:20.5px;background:#646464"></div>
<svg class="a" style="left:1498.4px;top:72.3px;" width="11" height="6.5" viewBox="0 0 11 6.5"><polyline points="1,1 5.5,5.5 10,1" fill="none" stroke="#cdcdcd" stroke-width="1.1"/></svg>
<div class="a t" style="left:1447.8px;top:71.8px;font-size:10.3px;color:#f0f0f0;-webkit-text-stroke:0.2px #f0f0f0">Ignore</div>
<svg class="a" style="left:1518.8px;top:41px;" width="17" height="17" viewBox="0 0 17 17"><rect x="7" y="1" width="9" height="1.1" fill="#cfcfcf"/><rect x="7" y="4" width="9" height="1.1" fill="#cfcfcf"/><rect x="7" y="7" width="9" height="1.1" fill="#cfcfcf"/><rect x="7.5" y="10" width="8" height="5" fill="none" stroke="#cfcfcf"/><path d="M0 13h5M3 11l2 2-2 2" stroke="#cfcfcf" fill="none" stroke-width="1.2"/></svg>
<div class="a" style="left:1539.5px;top:39.4px;width:86.09999999999991px;height:20.300000000000004px;background:#434343;border:1px solid #646464;border-radius:3px"></div>
<div class="a" style="left:1556px;top:39.4px;width:1px;height:20.300000000000004px;background:#646464"></div>
<svg class="a" style="left:1543.25px;top:42.49px;" width="10" height="6.0" viewBox="0 0 10 6.0"><polyline points="1,5.0 5.0,1 9,5.0" fill="none" stroke="#cdcdcd" stroke-width="1.1"/></svg>
<svg class="a" style="left:1543.25px;top:51.016000000000005px;" width="10" height="6.0" viewBox="0 0 10 6.0"><polyline points="1,1 5.0,5.0 9,1" fill="none" stroke="#cdcdcd" stroke-width="1.1"/></svg>
<div class="a t" style="left:1561px;top:45.8px;font-size:10.3px;color:#f0f0f0;-webkit-text-stroke:0.2px #f0f0f0">0 in</div>
<div class="a" style="left:1631.7px;top:38px;width:1px;height:48px;background:#474747"></div>
<svg class="a" style="left:1637px;top:42px;" width="18" height="16" viewBox="0 0 18 16"><path d="M1.2 0.5v7M0 2l1.2-1.5 1.2 1.5M0 6l1.2 1.5 1.2-1.5" fill="none" stroke="#cfcfcf" stroke-width="0.9"/><text x="3" y="8.3" font-family="Liberation Sans" font-size="10" fill="#cfcfcf">A</text><rect x="11" y="1" width="6" height="1" fill="#cfcfcf"/><rect x="11" y="4" width="6" height="1" fill="#cfcfcf"/><rect x="11" y="7" width="6" height="1" fill="#cfcfcf"/><rect x="4" y="10.5" width="13" height="1" fill="#cfcfcf"/><rect x="4" y="13.5" width="13" height="1" fill="#cfcfcf"/></svg>
<div class="a" style="left:1658.4px;top:39.4px;width:86.19999999999982px;height:20.300000000000004px;background:#434343;border:1px solid #646464;border-radius:3px"></div>
<div class="a" style="left:1675px;top:39.4px;width:1px;height:20.300000000000004px;background:#646464"></div>
<svg class="a" style="left:1662.2px;top:42.49px;" width="10" height="6.0" viewBox="0 0 10 6.0"><polyline points="1,5.0 5.0,1 9,5.0" fill="none" stroke="#cdcdcd" stroke-width="1.1"/></svg>
<svg class="a" style="left:1662.2px;top:51.016000000000005px;" width="10" height="6.0" viewBox="0 0 10 6.0"><polyline points="1,1 5.0,5.0 9,1" fill="none" stroke="#cdcdcd" stroke-width="1.1"/></svg>
<div class="a t" style="left:1680px;top:45.8px;font-size:10.3px;color:#f0f0f0;-webkit-text-stroke:0.2px #f0f0f0">2</div>
<svg class="a" style="left:1637px;top:68px;" width="18" height="17" viewBox="0 0 18 17"><text x="0" y="8.5" font-family="Liberation Sans" font-size="10" fill="#cfcfcf">A+</text><rect x="11.5" y="1" width="5.5" height="1" fill="#cfcfcf"/><rect x="11.5" y="4" width="5.5" height="1" fill="#cfcfcf"/><rect x="11.5" y="7" width="5.5" height="1" fill="#cfcfcf"/><rect x="0" y="11" width="17" height="1" fill="#cfcfcf"/><rect x="0" y="14" width="17" height="1" fill="#cfcfcf"/></svg>
<div class="a" style="left:1658.4px;top:65.3px;width:86.19999999999982px;height:20.5px;background:#434343;border:1px solid #646464;border-radius:3px"></div>
<div class="a" style="left:1675px;top:65.3px;width:1px;height:20.5px;background:#646464"></div>
<svg class="a" style="left:1662.2px;top:68.45px;" width="10" height="6.0" viewBox="0 0 10 6.0"><polyline points="1,5.0 5.0,1 9,5.0" fill="none" stroke="#cdcdcd" stroke-width="1.1"/></svg>
<svg class="a" style="left:1662.2px;top:77.06px;" width="10" height="6.0" viewBox="0 0 10 6.0"><polyline points="1,1 5.0,5.0 9,1" fill="none" stroke="#cdcdcd" stroke-width="1.1"/></svg>
<div class="a t" style="left:1680px;top:71.8px;font-size:10.3px;color:#f0f0f0;-webkit-text-stroke:0.2px #f0f0f0">1</div>
<div class="a" style="left:1750.6px;top:38px;width:1px;height:48px;background:#474747"></div>
<svg class="a" style="left:1760.5px;top:43px;" width="16" height="14" viewBox="0 0 16 14"><circle cx="2" cy="2" r="1.8" fill="#cfcfcf"/><circle cx="2" cy="10" r="1.8" fill="#cfcfcf"/><rect x="6" y="1" width="9" height="1.1" fill="#cfcfcf"/><rect x="6" y="4" width="9" height="1.1" fill="#cfcfcf"/><rect x="6" y="9" width="9" height="1.1" fill="#cfcfcf"/><rect x="6" y="12" width="9" height="1.1" fill="#cfcfcf"/></svg>
<div class="a t" style="left:1760.5px;top:67px;font-size:7px;color:#cfcfcf"><span style="font-size:7px;line-height:6px;display:inline-block;width:4px">1<br>2</span></div>
<svg class="a" style="left:1760.5px;top:69px;" width="16" height="14" viewBox="0 0 16 14"><rect x="6" y="1" width="9" height="1.1" fill="#cfcfcf"/><rect x="6" y="4" width="9" height="1.1" fill="#cfcfcf"/><rect x="6" y="9" width="9" height="1.1" fill="#cfcfcf"/><rect x="6" y="12" width="9" height="1.1" fill="#cfcfcf"/></svg>
<div class="a" style="left:1785.8px;top:38px;width:1px;height:48px;background:#474747"></div>
<div class="a" style="left:1792px;top:43.5px;width:12px;height:11.5px;border:1px solid #cfcfcf;border-radius:2px"></div>
<div class="a t" style="left:1809.8px;top:44.5px;font-size:10.5px;color:#ececec">Shading</div>
<div class="a" style="left:1792px;top:71.2px;width:12px;height:11.5px;border:1px solid #cfcfcf;border-radius:2px"></div>
<div class="a t" style="left:1809.8px;top:72.5px;font-size:10.5px;color:#ececec">Border</div>
<svg class="a" style="left:1865.8px;top:43.5px;" width="16.5" height="16" viewBox="0 0 16.5 16"><rect x="0" y="0" width="16" height="16" fill="#cfcfcf"/><rect x="1" y="1" width="4" height="4" fill="#3a3a3a"/><rect x="6" y="1" width="4" height="4" fill="#8a8a8a"/><rect x="11" y="1" width="4" height="4" fill="#3a3a3a"/><rect x="1" y="6" width="4" height="4" fill="#8a8a8a"/><rect x="6" y="6" width="4" height="4" fill="#3a3a3a"/><rect x="11" y="6" width="4" height="4" fill="#8a8a8a"/><rect x="1" y="11" width="4" height="4" fill="#bcbcbc"/><rect x="6" y="11" width="4" height="4" fill="#3a3a3a"/><rect x="11" y="11" width="4" height="4" fill="#3a3a3a"/></svg>
<svg class="a" style="left:1865.8px;top:70px;" width="17" height="17" viewBox="0 0 17 17"><path d="M0.5 16.5V0.5H16" fill="none" stroke="#cfcfcf" stroke-width="1"/><path d="M4 16.5V4H16" fill="none" stroke="#cfcfcf" stroke-width="1.6"/><path d="M9 16.5V9H16" fill="none" stroke="#cfcfcf" stroke-width="2.6"/></svg>
<div class="a" style="left:1888.8px;top:40.1px;width:70.3px;height:18.9px;background:#e6e6e6"></div>
<div class="a" style="left:1959.1px;top:40.1px;width:19px;height:18.9px;background:#585858;border-radius:0 3px 3px 0"></div>
<svg class="a" style="left:1963.6px;top:46.55px;" width="10" height="6.0" viewBox="0 0 10 6.0"><polyline points="1,1 5.0,5.0 9,1" fill="none" stroke="#9a9a9a" stroke-width="1.1"/></svg>
<div class="a" style="left:1892.9px;top:44.1px;width:12px;height:11.5px;background:#3e3e3e;border:1px solid #222"></div>
<div class="a t" style="left:1908.4px;top:43.55px;font-size:10.5px;color:#8c8c8c">[Black]</div>
<div class="a" style="left:1888.8px;top:68.2px;width:70.3px;height:18.599999999999994px;background:#e6e6e6"></div>
<div class="a" style="left:1959.1px;top:68.2px;width:19px;height:18.599999999999994px;background:#585858;border-radius:0 3px 3px 0"></div>
<svg class="a" style="left:1963.6px;top:74.5px;" width="10" height="6.0" viewBox="0 0 10 6.0"><polyline points="1,1 5.0,5.0 9,1" fill="none" stroke="#9a9a9a" stroke-width="1.1"/></svg>
<div class="a" style="left:1892.9px;top:72.2px;width:12px;height:11.5px;background:#3e3e3e;border:1px solid #222"></div>
<div class="a t" style="left:1908.4px;top:71.5px;font-size:10.5px;color:#8c8c8c">[Black]</div>
<div class="a" style="left:1983.4px;top:38px;width:1px;height:48px;background:#474747"></div>
<div class="a t" style="left:1999px;top:40px;font-size:14px;font-weight:bold;color:#cfcfcf">¶<span style="font-size:7px">▾</span></div>
<div class="a" style="left:2024.7px;top:39.3px;width:181.20000000000005px;height:20.300000000000004px;background:#434343;border:1px solid #646464;border-radius:3px"></div>
<div class="a" style="left:2024.7px;top:39.3px;width:162.29999999999995px;height:20.300000000000004px;background:#e4e4e4;border-radius:2px 0 0 2px"></div>
<div class="a" style="left:2187px;top:39.3px;width:1px;height:20.300000000000004px;background:#646464"></div>
<svg class="a" style="left:2191.45px;top:46.2px;" width="11" height="6.5" viewBox="0 0 11 6.5"><polyline points="1,1 5.5,5.5 10,1" fill="none" stroke="#cdcdcd" stroke-width="1.1"/></svg>
<div class="a t" style="left:2032px;top:45.7px;font-size:10.3px;color:#111;-webkit-text-stroke:0.2px #111">Opening Paragraph of Chapter</div>
<div class="a" style="left:2025.3px;top:69.2px;width:11.5px;height:11.5px;border:1px solid #cfcfcf;border-radius:2px"></div>
<div class="a t" style="left:2043px;top:70.5px;font-size:10.5px;color:#ececec">Hyphenate</div>
<div class="a t" style="left:2189px;top:68px;font-size:12px;font-weight:bold;color:#7c7c7c">¶<span style="font-size:9px">∕</span></div>
<div class="a" style="left:2211.7px;top:38px;width:1px;height:48px;background:#474747"></div>
<div class="a" style="left:2218.2px;top:39px;width:21.8px;height:21.7px;background:#2f2f2f;border-radius:3px"></div>
<svg class="a" style="left:2221.8px;top:43px;" width="15" height="14" viewBox="0 0 15 14"><rect x="0" y="0" width="6" height="1.1" fill="#cfcfcf"/><rect x="8" y="2" width="6" height="1.1" fill="#cfcfcf"/><rect x="0" y="3" width="6" height="1.1" fill="#cfcfcf"/><rect x="8" y="5" width="6" height="1.1" fill="#cfcfcf"/><rect x="0" y="6" width="6" height="1.1" fill="#cfcfcf"/><rect x="8" y="8" width="6" height="1.1" fill="#cfcfcf"/><rect x="0" y="9" width="6" height="1.1" fill="#cfcfcf"/><rect x="8" y="11" width="6" height="1.1" fill="#cfcfcf"/></svg>
<svg class="a" style="left:2221.8px;top:70px;" width="15" height="14" viewBox="0 0 15 14"><rect x="0" y="0" width="6" height="1.1" fill="#cfcfcf"/><rect x="8" y="2" width="6" height="1.1" fill="#cfcfcf"/><rect x="0" y="3" width="6" height="1.1" fill="#cfcfcf"/><rect x="8" y="5" width="6" height="1.1" fill="#cfcfcf"/><rect x="0" y="6" width="6" height="1.1" fill="#cfcfcf"/><rect x="8" y="8" width="6" height="1.1" fill="#cfcfcf"/><rect x="0" y="9" width="6" height="1.1" fill="#cfcfcf"/><rect x="8" y="11" width="6" height="1.1" fill="#cfcfcf"/></svg>
<div class="a" style="left:2246.5px;top:38px;width:1px;height:48px;background:#474747"></div>
<svg class="a" style="left:2253.8px;top:42px;" width="14" height="15" viewBox="0 0 14 15"><rect x="0.5" y="0.5" width="13" height="14" fill="none" stroke="#cfcfcf"/><line x1="4.8" y1="0" x2="4.8" y2="15" stroke="#cfcfcf"/><line x1="9.2" y1="0" x2="9.2" y2="15" stroke="#cfcfcf"/></svg>
<div class="a" style="left:2273.4px;top:39.4px;width:86.29999999999973px;height:20.300000000000004px;background:#434343;border:1px solid #646464;border-radius:3px"></div>
<div class="a" style="left:2290px;top:39.4px;width:1px;height:20.300000000000004px;background:#646464"></div>
<svg class="a" style="left:2277.2px;top:42.49px;" width="10" height="6.0" viewBox="0 0 10 6.0"><polyline points="1,5.0 5.0,1 9,5.0" fill="none" stroke="#cdcdcd" stroke-width="1.1"/></svg>
<svg class="a" style="left:2277.2px;top:51.016000000000005px;" width="10" height="6.0" viewBox="0 0 10 6.0"><polyline points="1,1 5.0,5.0 9,1" fill="none" stroke="#cdcdcd" stroke-width="1.1"/></svg>
<div class="a t" style="left:2295px;top:45.8px;font-size:10.3px;color:#f0f0f0;-webkit-text-stroke:0.2px #f0f0f0">1</div>
<svg class="a" style="left:2253.8px;top:68px;" width="14" height="15" viewBox="0 0 14 15"><rect x="0.5" y="0.5" width="13" height="14" fill="none" stroke="#cfcfcf"/><line x1="7" y1="0" x2="7" y2="15" stroke="#cfcfcf"/><path d="M2 7.5h3M12 7.5h-3" stroke="#cfcfcf"/></svg>
<div class="a" style="left:2273.4px;top:65.3px;width:86.29999999999973px;height:20.5px;background:#434343;border:1px solid #646464;border-radius:3px"></div>
<div class="a" style="left:2290px;top:65.3px;width:1px;height:20.5px;background:#646464"></div>
<svg class="a" style="left:2277.2px;top:68.45px;" width="10" height="6.0" viewBox="0 0 10 6.0"><polyline points="1,5.0 5.0,1 9,5.0" fill="none" stroke="#cdcdcd" stroke-width="1.1"/></svg>
<svg class="a" style="left:2277.2px;top:77.06px;" width="10" height="6.0" viewBox="0 0 10 6.0"><polyline points="1,1 5.0,5.0 9,1" fill="none" stroke="#cdcdcd" stroke-width="1.1"/></svg>
<div class="a t" style="left:2295px;top:71.8px;font-size:10.3px;color:#f0f0f0;-webkit-text-stroke:0.2px #f0f0f0">0.1667 in</div>
<svg class="a" style="left:2366.5px;top:42px;" width="16" height="16" viewBox="0 0 16 16"><path d="M1 2.5h14M3 0.5l-2 2 2 2M13 0.5l2 2-2 2" fill="none" stroke="#cfcfcf" stroke-width="1.2"/><rect x="0" y="6" width="15" height="2" fill="#cfcfcf"/><rect x="0" y="10" width="15" height="1.1" fill="#cfcfcf"/><rect x="0" y="13" width="15" height="1.1" fill="#cfcfcf"/></svg>
<div class="a" style="left:2388px;top:39.4px;width:69.69999999999982px;height:20.300000000000004px;background:#434343;border:1px solid #646464;border-radius:3px"></div>
<div class="a t" style="left:2393px;top:45.8px;font-size:10.3px;color:#f0f0f0;-webkit-text-stroke:0.2px #f0f0f0">None</div>
<svg class="a" style="left:2442.5px;top:46.25px;" width="11" height="6.5" viewBox="0 0 11 6.5"><polyline points="1,1 5.5,5.5 10,1" fill="none" stroke="#cdcdcd" stroke-width="1.1"/></svg>
<svg class="a" style="left:2366.5px;top:68px;" width="18" height="18" viewBox="0 0 18 18"><path d="M1 0.5h6M1 16.5h6M4 0.5v16" fill="none" stroke="#cfcfcf" stroke-width="1.2"/></svg>
<div class="a t" style="left:2375px;top:70px;font-size:10.5px;color:#cfcfcf">x:</div>
<div class="a" style="left:2388px;top:66px;width:69.7px;height:20px;background:#585858;border-radius:3px"></div>
<div class="a t" style="left:2392.5px;top:71.3px;font-size:10.3px;color:#a9a9a9">2.2772 in</div>
<div class="a" style="left:2463.5px;top:38px;width:1px;height:48px;background:#474747"></div>
<div class="a" style="left:9px;top:92px;width:40px;height:1266px;background:#535353;border-left:1px solid #3b3b3b;border-right:1px solid #3b3b3b"></div>
<div class="a" style="left:10px;top:93px;width:38px;height:12px;background:#424242"></div>
<svg class="a" style="left:0px;top:0px;" width="60" height="720" viewBox="0 0 60 720"><path d="M14.8 97.2l3 1.6-3 1.6zM18.6 97.2l3 1.6-3 1.6z" fill="#c8c8c8"/><rect x="19.2" y="107.6" width="1" height="4.2" fill="#3c3c3c"/><rect x="21.3" y="107.6" width="1" height="4.2" fill="#3c3c3c"/><rect x="23.4" y="107.6" width="1" height="4.2" fill="#3c3c3c"/><rect x="25.5" y="107.6" width="1" height="4.2" fill="#3c3c3c"/><rect x="27.6" y="107.6" width="1" height="4.2" fill="#3c3c3c"/><rect x="29.7" y="107.6" width="1" height="4.2" fill="#3c3c3c"/><rect x="31.8" y="107.6" width="1" height="4.2" fill="#3c3c3c"/><rect x="33.9" y="107.6" width="1" height="4.2" fill="#3c3c3c"/><rect x="36.0" y="107.6" width="1" height="4.2" fill="#3c3c3c"/><path d="M24.3 124.2L35.8 134.6L30.4 134.9L24.3 139.6Z" fill="none" stroke="#c8c8c8" stroke-width="1.2" stroke-linejoin="miter"/><path d="M24 147L36.5 158.2L30.6 158.5L24 164Z" fill="#c8c8c8"/><path d="M23.3 172v13.5h6.5M23.3 172h6.3l3.6 3.7v3.5M29.6 172v3.7h3.6" fill="none" stroke="#c8c8c8" stroke-width="1.1"/><path d="M31.5 179.5l6 4.3-3.2.5-2.8 3z" fill="#c8c8c8"/><path d="M20.3 196v14.2M38 196v14.2" stroke="#c8c8c8" stroke-width="1.6"/><path d="M22.5 203.1h13.3" stroke="#c8c8c8" stroke-width="1.3"/><path d="M21.8 203.1l3.5-3v6zM36.5 203.1l-3.5-3v6z" fill="#c8c8c8"/><path d="M22.5 224.5v10h14v-10" fill="none" stroke="#c8c8c8" stroke-width="1.6"/><rect x="25.5" y="229" width="1.8" height="1.8" fill="#c8c8c8"/><rect x="28.8" y="229" width="1.8" height="1.8" fill="#c8c8c8"/><rect x="32.1" y="229" width="1.8" height="1.8" fill="#c8c8c8"/><path d="M26 219.5l4 4" stroke="#c8c8c8" stroke-width="1.3"/><path d="M31.5 225l-4.5-1 3.5-3.5z" fill="#c8c8c8"/><path d="M38 236l3-3v3z" fill="#c8c8c8"/><rect x="15" y="243.6" width="28.3" height="21.4" rx="3" fill="#323232"/><path d="M22.3 247.2h14v3.4h-1.4v-1.5h-4.3v9.6h2.2v1.5h-6.9v-1.5h2.2v-9.6h-4.3v1.5h-1.5z" fill="#c8c8c8"/><path d="M38.5 263.5l3-3v3z" fill="#c8c8c8"/><path d="M21.3 285.3L36.5 271.3" stroke="#c8c8c8" stroke-width="1.5"/><path d="M30.5 296.5l3.5-3 4.2 4.2-3 3.5z" fill="#c8c8c8"/><path d="M30 297.5l5.2 5.2-2.5 5.8-10.2 2.2 2.2-10.2z" fill="#c8c8c8"/><path d="M22.8 310l5-5" stroke="#535353" stroke-width="0.9"/><circle cx="28.5" cy="304.5" r="1.2" fill="#535353"/><path d="M38.5 311l3-3v3z" fill="#c8c8c8"/><path d="M34 318.5l4.3 4.3-2 2-4.3-4.3z" fill="#c8c8c8"/><path d="M31.2 321.3l4.3 4.3-9 9-5.3 1 1-5.3z" fill="#c8c8c8"/><path d="M22.3 330.5l2.2 2.2" stroke="#535353" stroke-width="0.9"/><path d="M38.5 335.5l3-3v3z" fill="#c8c8c8"/><rect x="21.4" y="343.4" width="15.6" height="13.4" fill="none" stroke="#c8c8c8" stroke-width="1.3"/><path d="M21.4 343.4L37 356.8M37 343.4L21.4 356.8" stroke="#c8c8c8" stroke-width="1"/><path d="M38.5 359l3-3v3z" fill="#c8c8c8"/><rect x="21.4" y="367.6" width="15.6" height="13.4" fill="#5e5e5e" stroke="#c8c8c8" stroke-width="1.3"/><path d="M38.5 383l3-3v3z" fill="#c8c8c8"/><circle cx="35.2" cy="396.3" r="2.9" fill="none" stroke="#c8c8c8" stroke-width="1.5"/><circle cx="35.2" cy="405.2" r="2.9" fill="none" stroke="#c8c8c8" stroke-width="1.5"/><path d="M20.5 397.5L33 403.3M20.5 404.2L33 398.2" stroke="#c8c8c8" stroke-width="1.6"/><path d="M20.2 416.2l9 7.5-4.8.4-4.2 4.5z" fill="#c8c8c8"/><rect x="26.5" y="420" width="11.5" height="10.3" fill="none" stroke="#c8c8c8" stroke-width="1" stroke-dasharray="1.6,1.6"/><path d="M38.5 433l3-3v3z" fill="#c8c8c8"/><defs><linearGradient id="gs" x1="0" x2="1"><stop offset="0" stop-color="#cfcfcf"/><stop offset="1" stop-color="#555"/></linearGradient><linearGradient id="gf" x1="0" x2="0" y1="0" y2="1"><stop offset="0" stop-color="#606060"/><stop offset="1" stop-color="#cfcfcf"/></linearGradient></defs><rect x="21.4" y="441.8" width="15.6" height="13.6" fill="url(#gs)" stroke="#c8c8c8" stroke-width="1.2"/><rect x="21.4" y="466" width="15.6" height="13.6" fill="url(#gf)" stroke="#c8c8c8" stroke-width="1.2"/><path d="M21.7 492.8h14.6v10l-4 4.2H21.7z" fill="#c8c8c8"/><path d="M24 496h10M24 499h10M24 502h6" stroke="#535353" stroke-width="1.1"/><path d="M32.3 507v-4h4z" fill="#535353"/><path d="M33.5 516.5a2.6 2.6 0 0 1 3.8 3.8l-2 2 .9.9-1.3 1.3-5.2-5.2 1.3-1.3.9.9z" fill="#c8c8c8"/><path d="M30.3 520.6l-8.5 8.5-.8 3.5 3.5-.8 8.5-8.5" fill="none" stroke="#c8c8c8" stroke-width="1.3"/><rect x="27.5" y="528.3" width="10.5" height="4.3" fill="none" stroke="#c8c8c8" stroke-width="1"/><path d="M30.5 528.3v4.3M33.5 528.3v4.3" stroke="#c8c8c8"/><path d="M39 534l3-3v3z" fill="#c8c8c8"/><path d="M22.5 546.5c-1.5-1.5.3-3 1.6-1.8l2 2V541c0-1.6 2.3-1.6 2.3 0v-2c0-1.6 2.4-1.6 2.4 0v2c0-1.4 2.3-1.4 2.3 0v2.5c0-1.4 2.3-1.4 2.3 0v6c0 3.5-2.3 6-5.7 6h-1.5c-2.2 0-3.5-1.2-4.6-2.5z" fill="#c8c8c8"/><circle cx="27.8" cy="569.6" r="5.2" fill="none" stroke="#c8c8c8" stroke-width="1.6"/><path d="M31.6 573.4l4.8 5.2" stroke="#c8c8c8" stroke-width="2.2"/><rect x="18.5" y="593.5" width="7.5" height="7" fill="#222" stroke="#ddd" stroke-width="1"/><rect x="14.5" y="589.8" width="7.5" height="7" fill="#fff" stroke="#222" stroke-width="1"/><path d="M15 596.3l6.5-6" stroke="#e01b1b" stroke-width="1.2"/><path d="M35 592.3h5a2 2 0 0 1 2 2v4" fill="none" stroke="#c8c8c8" stroke-width="1.2"/><path d="M33.5 592.3l2.5-2v4z M42 599.8l-2-2.5h4z" fill="#c8c8c8"/><rect x="23.8" y="615.8" width="18" height="18" fill="#f4f4f4" stroke="#666" stroke-width="0.8"/><path d="M24.3 633.3L41.3 616.3" stroke="#e01b1b" stroke-width="1.6"/><text x="28.5" y="631.5" font-family="Liberation Serif" font-size="14" fill="#cfcfcf">T</text><rect x="15" y="607" width="19" height="19" fill="#fff" stroke="#777" stroke-width="0.8"/><path d="M17.2 610h14.6v4.3h-1.5v-1.8h-3.8v10.5h2v1.8h-7.2v-1.8h2v-10.5h-3.8v1.8h-1.5z" fill="#000"/><rect x="18.3" y="645.3" width="6.8" height="6.8" fill="#555" stroke="#8a8a8a" stroke-width="1"/><rect x="31" y="643" width="14" height="12.5" rx="2.5" fill="#333"/><path d="M34 645.3h8v2.3h-.9v-1h-2.1v6h1.2v1h-4.1v-1h1.2v-6h-2.1v1H34z" fill="#d8d8d8"/><rect x="15" y="662.5" width="28.3" height="21.3" rx="3" fill="#333"/><rect x="21.8" y="666.3" width="15" height="13.5" fill="#000" stroke="#999" stroke-width="1"/><path d="M39 682.5l3-3v3z" fill="#c8c8c8"/><rect x="15" y="691" width="28.3" height="22" rx="3" fill="#333"/><rect x="23" y="696" width="12.5" height="12.5" fill="none" stroke="#bbb" stroke-width="1"/><rect x="25.5" y="698.8" width="5" height="4" fill="none" stroke="#bbb" stroke-width="1"/><rect x="28.2" y="701.3" width="5" height="4" fill="#333" stroke="#bbb" stroke-width="1"/><path d="M39 711.5l3-3v3z" fill="#c8c8c8"/></svg>
<div class="a" style="left:49px;top:92px;width:2px;height:1266px;background:#3e3e3e"></div>
<div class="a" style="left:9px;top:92px;width:2506px;height:1px;background:#3a3a3a"></div>
<div class="a" style="left:51px;top:93px;width:2464px;height:29px;background:#424242"></div>
<div class="a" style="left:51px;top:93px;width:241px;height:29px;background:#535353"></div>
<div class="a" style="left:292px;top:93px;width:1px;height:29px;background:#3c3c3c"></div>
<div class="a t" style="left:65.3px;top:102px;font-size:10.8px;font-weight:bold;color:#f2f2f2">*THE GOLDEN ONE ver1.indd @ 148%</div>
<svg class="a" style="left:269px;top:104px;" width="8" height="8" viewBox="0 0 8 8"><path d="M1 1L7 7M7 1L1 7" stroke="#e8e8e8" stroke-width="1.8"/></svg>
<div class="a" style="left:51px;top:122px;width:2464px;height:16px;background:#1e1e1e;border-bottom:1px solid #8c8c8c"></div>
<div class="a" style="left:51px;top:138px;width:16px;height:1220px;background:#1e1e1e;border-right:1px solid #8c8c8c"></div>
<div class="a" style="left:66px;top:122px;width:1px;height:16px;background:#8c8c8c"></div>
<svg class="a" style="left:51px;top:122px;" width="15" height="15" viewBox="0 0 15 15"><g stroke="#cfcfcf" stroke-width="1" stroke-dasharray="1,1.5"><line x1="0" y1="4.5" x2="15" y2="4.5"/><line x1="4.5" y1="1" x2="4.5" y2="15"/></g></svg>
<svg class="a" style="left:67px;top:122px;" width="2448" height="15" viewBox="0 0 2448 15"><line x1="7.8" y1="11" x2="7.8" y2="15" stroke="#b4b4b4" stroke-width="1"/><line x1="25.6" y1="13" x2="25.6" y2="15" stroke="#b4b4b4" stroke-width="1"/><line x1="43.3" y1="0" x2="43.3" y2="15" stroke="#b4b4b4" stroke-width="1"/><line x1="61.0" y1="13" x2="61.0" y2="15" stroke="#b4b4b4" stroke-width="1"/><line x1="78.8" y1="11" x2="78.8" y2="15" stroke="#b4b4b4" stroke-width="1"/><line x1="96.5" y1="13" x2="96.5" y2="15" stroke="#b4b4b4" stroke-width="1"/><line x1="114.2" y1="9" x2="114.2" y2="15" stroke="#b4b4b4" stroke-width="1"/><line x1="132.0" y1="13" x2="132.0" y2="15" stroke="#b4b4b4" stroke-width="1"/><line x1="149.7" y1="11" x2="149.7" y2="15" stroke="#b4b4b4" stroke-width="1"/><line x1="167.5" y1="13" x2="167.5" y2="15" stroke="#b4b4b4" stroke-width="1"/><line x1="185.2" y1="0" x2="185.2" y2="15" stroke="#b4b4b4" stroke-width="1"/><line x1="202.9" y1="13" x2="202.9" y2="15" stroke="#b4b4b4" stroke-width="1"/><line x1="220.7" y1="11" x2="220.7" y2="15" stroke="#b4b4b4" stroke-width="1"/><line x1="238.4" y1="13" x2="238.4" y2="15" stroke="#b4b4b4" stroke-width="1"/><line x1="256.1" y1="9" x2="256.1" y2="15" stroke="#b4b4b4" stroke-width="1"/><line x1="273.9" y1="13" x2="273.9" y2="15" stroke="#b4b4b4" stroke-width="1"/><line x1="291.6" y1="11" x2="291.6" y2="15" stroke="#b4b4b4" stroke-width="1"/><line x1="309.4" y1="13" x2="309.4" y2="15" stroke="#b4b4b4" stroke-width="1"/><line x1="327.1" y1="0" x2="327.1" y2="15" stroke="#b4b4b4" stroke-width="1"/><line x1="344.8" y1="13" x2="344.8" y2="15" stroke="#b4b4b4" stroke-width="1"/><line x1="362.6" y1="11" x2="362.6" y2="15" stroke="#b4b4b4" stroke-width="1"/><line x1="380.3" y1="13" x2="380.3" y2="15" stroke="#b4b4b4" stroke-width="1"/><line x1="398.0" y1="9" x2="398.0" y2="15" stroke="#b4b4b4" stroke-width="1"/><line x1="415.8" y1="13" x2="415.8" y2="15" stroke="#b4b4b4" stroke-width="1"/><line x1="433.5" y1="11" x2="433.5" y2="15" stroke="#b4b4b4" stroke-width="1"/><line x1="451.3" y1="13" x2="451.3" y2="15" stroke="#b4b4b4" stroke-width="1"/><line x1="469.0" y1="0" x2="469.0" y2="15" stroke="#b4b4b4" stroke-width="1"/><line x1="486.7" y1="13" x2="486.7" y2="15" stroke="#b4b4b4" stroke-width="1"/><line x1="504.5" y1="11" x2="504.5" y2="15" stroke="#b4b4b4" stroke-width="1"/><line x1="522.2" y1="13" x2="522.2" y2="15" stroke="#b4b4b4" stroke-width="1"/><line x1="539.9" y1="9" x2="539.9" y2="15" stroke="#b4b4b4" stroke-width="1"/><line x1="557.7" y1="13" x2="557.7" y2="15" stroke="#b4b4b4" stroke-width="1"/><line x1="575.4" y1="11" x2="575.4" y2="15" stroke="#b4b4b4" stroke-width="1"/><line x1="593.2" y1="13" x2="593.2" y2="15" stroke="#b4b4b4" stroke-width="1"/><line x1="610.9" y1="0" x2="610.9" y2="15" stroke="#b4b4b4" stroke-width="1"/><line x1="628.6" y1="13" x2="628.6" y2="15" stroke="#b4b4b4" stroke-width="1"/><line x1="646.4" y1="11" x2="646.4" y2="15" stroke="#b4b4b4" stroke-width="1"/><line x1="664.1" y1="13" x2="664.1" y2="15" stroke="#b4b4b4" stroke-width="1"/><line x1="681.8" y1="9" x2="681.8" y2="15" stroke="#b4b4b4" stroke-width="1"/><line x1="699.6" y1="13" x2="699.6" y2="15" stroke="#b4b4b4" stroke-width="1"/><line x1="717.3" y1="11" x2="717.3" y2="15" stroke="#b4b4b4" stroke-width="1"/><line x1="735.1" y1="13" x2="735.1" y2="15" stroke="#b4b4b4" stroke-width="1"/><line x1="752.8" y1="0" x2="752.8" y2="15" stroke="#b4b4b4" stroke-width="1"/><line x1="770.5" y1="13" x2="770.5" y2="15" stroke="#b4b4b4" stroke-width="1"/><line x1="788.3" y1="11" x2="788.3" y2="15" stroke="#b4b4b4" stroke-width="1"/><line x1="806.0" y1="13" x2="806.0" y2="15" stroke="#b4b4b4" stroke-width="1"/><line x1="823.8" y1="9" x2="823.8" y2="15" stroke="#b4b4b4" stroke-width="1"/><line x1="841.5" y1="13" x2="841.5" y2="15" stroke="#b4b4b4" stroke-width="1"/><line x1="859.2" y1="11" x2="859.2" y2="15" stroke="#b4b4b4" stroke-width="1"/><line x1="877.0" y1="13" x2="877.0" y2="15" stroke="#b4b4b4" stroke-width="1"/><line x1="894.7" y1="0" x2="894.7" y2="15" stroke="#b4b4b4" stroke-width="1"/><line x1="912.4" y1="13" x2="912.4" y2="15" stroke="#b4b4b4" stroke-width="1"/><line x1="930.2" y1="11" x2="930.2" y2="15" stroke="#b4b4b4" stroke-width="1"/><line x1="947.9" y1="13" x2="947.9" y2="15" stroke="#b4b4b4" stroke-width="1"/><line x1="965.7" y1="9" x2="965.7" y2="15" stroke="#b4b4b4" stroke-width="1"/><line x1="983.4" y1="13" x2="983.4" y2="15" stroke="#b4b4b4" stroke-width="1"/><line x1="1001.1" y1="11" x2="1001.1" y2="15" stroke="#b4b4b4" stroke-width="1"/><line x1="1018.9" y1="13" x2="1018.9" y2="15" stroke="#b4b4b4" stroke-width="1"/><line x1="1036.6" y1="0" x2="1036.6" y2="15" stroke="#b4b4b4" stroke-width="1"/><line x1="1054.3" y1="13" x2="1054.3" y2="15" stroke="#b4b4b4" stroke-width="1"/><line x1="1072.1" y1="11" x2="1072.1" y2="15" stroke="#b4b4b4" stroke-width="1"/><line x1="1089.8" y1="13" x2="1089.8" y2="15" stroke="#b4b4b4" stroke-width="1"/><line x1="1107.5" y1="9" x2="1107.5" y2="15" stroke="#b4b4b4" stroke-width="1"/><line x1="1125.3" y1="13" x2="1125.3" y2="15" stroke="#b4b4b4" stroke-width="1"/><line x1="1143.0" y1="11" x2="1143.0" y2="15" stroke="#b4b4b4" stroke-width="1"/><line x1="1160.8" y1="13" x2="1160.8" y2="15" stroke="#b4b4b4" stroke-width="1"/><line x1="1178.5" y1="0" x2="1178.5" y2="15" stroke="#b4b4b4" stroke-width="1"/><line x1="1196.2" y1="13" x2="1196.2" y2="15" stroke="#b4b4b4" stroke-width="1"/><line x1="1214.0" y1="11" x2="1214.0" y2="15" stroke="#b4b4b4" stroke-width="1"/><line x1="1231.7" y1="13" x2="1231.7" y2="15" stroke="#b4b4b4" stroke-width="1"/><line x1="1249.5" y1="9" x2="1249.5" y2="15" stroke="#b4b4b4" stroke-width="1"/><line x1="1267.2" y1="13" x2="1267.2" y2="15" stroke="#b4b4b4" stroke-width="1"/><line x1="1284.9" y1="11" x2="1284.9" y2="15" stroke="#b4b4b4" stroke-width="1"/><line x1="1302.7" y1="13" x2="1302.7" y2="15" stroke="#b4b4b4" stroke-width="1"/><line x1="1320.4" y1="0" x2="1320.4" y2="15" stroke="#b4b4b4" stroke-width="1"/><line x1="1338.1" y1="13" x2="1338.1" y2="15" stroke="#b4b4b4" stroke-width="1"/><line x1="1355.9" y1="11" x2="1355.9" y2="15" stroke="#b4b4b4" stroke-width="1"/><line x1="1373.6" y1="13" x2="1373.6" y2="15" stroke="#b4b4b4" stroke-width="1"/><line x1="1391.3" y1="9" x2="1391.3" y2="15" stroke="#b4b4b4" stroke-width="1"/><line x1="1409.1" y1="13" x2="1409.1" y2="15" stroke="#b4b4b4" stroke-width="1"/><line x1="1426.8" y1="11" x2="1426.8" y2="15" stroke="#b4b4b4" stroke-width="1"/><line x1="1444.6" y1="13" x2="1444.6" y2="15" stroke="#b4b4b4" stroke-width="1"/><line x1="1462.3" y1="0" x2="1462.3" y2="15" stroke="#b4b4b4" stroke-width="1"/><line x1="1480.0" y1="13" x2="1480.0" y2="15" stroke="#b4b4b4" stroke-width="1"/><line x1="1497.8" y1="11" x2="1497.8" y2="15" stroke="#b4b4b4" stroke-width="1"/><line x1="1515.5" y1="13" x2="1515.5" y2="15" stroke="#b4b4b4" stroke-width="1"/><line x1="1533.2" y1="9" x2="1533.2" y2="15" stroke="#b4b4b4" stroke-width="1"/><line x1="1551.0" y1="13" x2="1551.0" y2="15" stroke="#b4b4b4" stroke-width="1"/><line x1="1568.7" y1="11" x2="1568.7" y2="15" stroke="#b4b4b4" stroke-width="1"/><line x1="1586.5" y1="13" x2="1586.5" y2="15" stroke="#b4b4b4" stroke-width="1"/><line x1="1604.2" y1="0" x2="1604.2" y2="15" stroke="#b4b4b4" stroke-width="1"/><line x1="1621.9" y1="13" x2="1621.9" y2="15" stroke="#b4b4b4" stroke-width="1"/><line x1="1639.7" y1="11" x2="1639.7" y2="15" stroke="#b4b4b4" stroke-width="1"/><line x1="1657.4" y1="13" x2="1657.4" y2="15" stroke="#b4b4b4" stroke-width="1"/><line x1="1675.2" y1="9" x2="1675.2" y2="15" stroke="#b4b4b4" stroke-width="1"/><line x1="1692.9" y1="13" x2="1692.9" y2="15" stroke="#b4b4b4" stroke-width="1"/><line x1="1710.6" y1="11" x2="1710.6" y2="15" stroke="#b4b4b4" stroke-width="1"/><line x1="1728.4" y1="13" x2="1728.4" y2="15" stroke="#b4b4b4" stroke-width="1"/><line x1="1746.1" y1="0" x2="1746.1" y2="15" stroke="#b4b4b4" stroke-width="1"/><line x1="1763.8" y1="13" x2="1763.8" y2="15" stroke="#b4b4b4" stroke-width="1"/><line x1="1781.6" y1="11" x2="1781.6" y2="15" stroke="#b4b4b4" stroke-width="1"/><line x1="1799.3" y1="13" x2="1799.3" y2="15" stroke="#b4b4b4" stroke-width="1"/><line x1="1817.0" y1="9" x2="1817.0" y2="15" stroke="#b4b4b4" stroke-width="1"/><line x1="1834.8" y1="13" x2="1834.8" y2="15" stroke="#b4b4b4" stroke-width="1"/><line x1="1852.5" y1="11" x2="1852.5" y2="15" stroke="#b4b4b4" stroke-width="1"/><line x1="1870.3" y1="13" x2="1870.3" y2="15" stroke="#b4b4b4" stroke-width="1"/><line x1="1888.0" y1="0" x2="1888.0" y2="15" stroke="#b4b4b4" stroke-width="1"/><line x1="1905.7" y1="13" x2="1905.7" y2="15" stroke="#b4b4b4" stroke-width="1"/><line x1="1923.5" y1="11" x2="1923.5" y2="15" stroke="#b4b4b4" stroke-width="1"/><line x1="1941.2" y1="13" x2="1941.2" y2="15" stroke="#b4b4b4" stroke-width="1"/><line x1="1959.0" y1="9" x2="1959.0" y2="15" stroke="#b4b4b4" stroke-width="1"/><line x1="1976.7" y1="13" x2="1976.7" y2="15" stroke="#b4b4b4" stroke-width="1"/><line x1="1994.4" y1="11" x2="1994.4" y2="15" stroke="#b4b4b4" stroke-width="1"/><line x1="2012.2" y1="13" x2="2012.2" y2="15" stroke="#b4b4b4" stroke-width="1"/><line x1="2029.9" y1="0" x2="2029.9" y2="15" stroke="#b4b4b4" stroke-width="1"/><line x1="2047.6" y1="13" x2="2047.6" y2="15" stroke="#b4b4b4" stroke-width="1"/><line x1="2065.4" y1="11" x2="2065.4" y2="15" stroke="#b4b4b4" stroke-width="1"/><line x1="2083.1" y1="13" x2="2083.1" y2="15" stroke="#b4b4b4" stroke-width="1"/><line x1="2100.8" y1="9" x2="2100.8" y2="15" stroke="#b4b4b4" stroke-width="1"/><line x1="2118.6" y1="13" x2="2118.6" y2="15" stroke="#b4b4b4" stroke-width="1"/><line x1="2136.3" y1="11" x2="2136.3" y2="15" stroke="#b4b4b4" stroke-width="1"/><line x1="2154.1" y1="13" x2="2154.1" y2="15" stroke="#b4b4b4" stroke-width="1"/><line x1="2171.8" y1="0" x2="2171.8" y2="15" stroke="#b4b4b4" stroke-width="1"/><line x1="2189.5" y1="13" x2="2189.5" y2="15" stroke="#b4b4b4" stroke-width="1"/><line x1="2207.3" y1="11" x2="2207.3" y2="15" stroke="#b4b4b4" stroke-width="1"/><line x1="2225.0" y1="13" x2="2225.0" y2="15" stroke="#b4b4b4" stroke-width="1"/><line x1="2242.8" y1="9" x2="2242.8" y2="15" stroke="#b4b4b4" stroke-width="1"/><line x1="2260.5" y1="13" x2="2260.5" y2="15" stroke="#b4b4b4" stroke-width="1"/><line x1="2278.2" y1="11" x2="2278.2" y2="15" stroke="#b4b4b4" stroke-width="1"/><line x1="2296.0" y1="13" x2="2296.0" y2="15" stroke="#b4b4b4" stroke-width="1"/><line x1="2313.7" y1="0" x2="2313.7" y2="15" stroke="#b4b4b4" stroke-width="1"/><line x1="2331.4" y1="13" x2="2331.4" y2="15" stroke="#b4b4b4" stroke-width="1"/><line x1="2349.2" y1="11" x2="2349.2" y2="15" stroke="#b4b4b4" stroke-width="1"/><line x1="2366.9" y1="13" x2="2366.9" y2="15" stroke="#b4b4b4" stroke-width="1"/><line x1="2384.7" y1="9" x2="2384.7" y2="15" stroke="#b4b4b4" stroke-width="1"/><line x1="2402.4" y1="13" x2="2402.4" y2="15" stroke="#b4b4b4" stroke-width="1"/><line x1="2420.1" y1="11" x2="2420.1" y2="15" stroke="#b4b4b4" stroke-width="1"/><line x1="2437.9" y1="13" x2="2437.9" y2="15" stroke="#b4b4b4" stroke-width="1"/></svg>
<div class="a t" style="left:111.89999999999995px;top:123.3px;font-size:10px;color:#f4f4f4">5</div>
<div class="a t" style="left:253.79999999999993px;top:123.3px;font-size:10px;color:#f4f4f4">4</div>
<div class="a t" style="left:395.69999999999993px;top:123.3px;font-size:10px;color:#f4f4f4">3</div>
<div class="a t" style="left:537.6px;top:123.3px;font-size:10px;color:#f4f4f4">2</div>
<div class="a t" style="left:679.5px;top:123.3px;font-size:10px;color:#f4f4f4">1</div>
<div class="a t" style="left:821.4px;top:123.3px;font-size:10px;color:#f4f4f4">0</div>
<div class="a t" style="left:963.3px;top:123.3px;font-size:10px;color:#f4f4f4">1</div>
<div class="a t" style="left:1105.1999999999998px;top:123.3px;font-size:10px;color:#f4f4f4">2</div>
<div class="a t" style="left:1247.1px;top:123.3px;font-size:10px;color:#f4f4f4">3</div>
<div class="a t" style="left:1389.0px;top:123.3px;font-size:10px;color:#f4f4f4">4</div>
<div class="a t" style="left:1530.8999999999999px;top:123.3px;font-size:10px;color:#f4f4f4">5</div>
<div class="a t" style="left:1672.8px;top:123.3px;font-size:10px;color:#f4f4f4">6</div>
<div class="a t" style="left:1814.6999999999998px;top:123.3px;font-size:10px;color:#f4f4f4">7</div>
<div class="a t" style="left:1956.6px;top:123.3px;font-size:10px;color:#f4f4f4">8</div>
<div class="a t" style="left:2098.5px;top:123.3px;font-size:10px;color:#f4f4f4">9</div>
<div class="a t" style="left:2240.4px;top:123.3px;font-size:10px;color:#f4f4f4">10</div>
<div class="a t" style="left:2382.2999999999997px;top:123.3px;font-size:10px;color:#f4f4f4">11</div>
<svg class="a" style="left:51px;top:138px;" width="15" height="1220" viewBox="0 0 15 1220"><line x1="11" y1="10.1" x2="15" y2="10.1" stroke="#b4b4b4" stroke-width="1"/><line x1="13" y1="27.8" x2="15" y2="27.8" stroke="#b4b4b4" stroke-width="1"/><line x1="9" y1="45.6" x2="15" y2="45.6" stroke="#b4b4b4" stroke-width="1"/><line x1="13" y1="63.3" x2="15" y2="63.3" stroke="#b4b4b4" stroke-width="1"/><line x1="11" y1="81.0" x2="15" y2="81.0" stroke="#b4b4b4" stroke-width="1"/><line x1="13" y1="98.8" x2="15" y2="98.8" stroke="#b4b4b4" stroke-width="1"/><line x1="0" y1="116.5" x2="15" y2="116.5" stroke="#b4b4b4" stroke-width="1"/><line x1="13" y1="134.2" x2="15" y2="134.2" stroke="#b4b4b4" stroke-width="1"/><line x1="11" y1="152.0" x2="15" y2="152.0" stroke="#b4b4b4" stroke-width="1"/><line x1="13" y1="169.7" x2="15" y2="169.7" stroke="#b4b4b4" stroke-width="1"/><line x1="9" y1="187.4" x2="15" y2="187.4" stroke="#b4b4b4" stroke-width="1"/><line x1="13" y1="205.2" x2="15" y2="205.2" stroke="#b4b4b4" stroke-width="1"/><line x1="11" y1="222.9" x2="15" y2="222.9" stroke="#b4b4b4" stroke-width="1"/><line x1="13" y1="240.7" x2="15" y2="240.7" stroke="#b4b4b4" stroke-width="1"/><line x1="0" y1="258.4" x2="15" y2="258.4" stroke="#b4b4b4" stroke-width="1"/><line x1="13" y1="276.1" x2="15" y2="276.1" stroke="#b4b4b4" stroke-width="1"/><line x1="11" y1="293.9" x2="15" y2="293.9" stroke="#b4b4b4" stroke-width="1"/><line x1="13" y1="311.6" x2="15" y2="311.6" stroke="#b4b4b4" stroke-width="1"/><line x1="9" y1="329.4" x2="15" y2="329.4" stroke="#b4b4b4" stroke-width="1"/><line x1="13" y1="347.1" x2="15" y2="347.1" stroke="#b4b4b4" stroke-width="1"/><line x1="11" y1="364.8" x2="15" y2="364.8" stroke="#b4b4b4" stroke-width="1"/><line x1="13" y1="382.6" x2="15" y2="382.6" stroke="#b4b4b4" stroke-width="1"/><line x1="0" y1="400.3" x2="15" y2="400.3" stroke="#b4b4b4" stroke-width="1"/><line x1="13" y1="418.0" x2="15" y2="418.0" stroke="#b4b4b4" stroke-width="1"/><line x1="11" y1="435.8" x2="15" y2="435.8" stroke="#b4b4b4" stroke-width="1"/><line x1="13" y1="453.5" x2="15" y2="453.5" stroke="#b4b4b4" stroke-width="1"/><line x1="9" y1="471.2" x2="15" y2="471.2" stroke="#b4b4b4" stroke-width="1"/><line x1="13" y1="489.0" x2="15" y2="489.0" stroke="#b4b4b4" stroke-width="1"/><line x1="11" y1="506.7" x2="15" y2="506.7" stroke="#b4b4b4" stroke-width="1"/><line x1="13" y1="524.5" x2="15" y2="524.5" stroke="#b4b4b4" stroke-width="1"/><line x1="0" y1="542.2" x2="15" y2="542.2" stroke="#b4b4b4" stroke-width="1"/><line x1="13" y1="559.9" x2="15" y2="559.9" stroke="#b4b4b4" stroke-width="1"/><line x1="11" y1="577.7" x2="15" y2="577.7" stroke="#b4b4b4" stroke-width="1"/><line x1="13" y1="595.4" x2="15" y2="595.4" stroke="#b4b4b4" stroke-width="1"/><line x1="9" y1="613.2" x2="15" y2="613.2" stroke="#b4b4b4" stroke-width="1"/><line x1="13" y1="630.9" x2="15" y2="630.9" stroke="#b4b4b4" stroke-width="1"/><line x1="11" y1="648.6" x2="15" y2="648.6" stroke="#b4b4b4" stroke-width="1"/><line x1="13" y1="666.4" x2="15" y2="666.4" stroke="#b4b4b4" stroke-width="1"/><line x1="0" y1="684.1" x2="15" y2="684.1" stroke="#b4b4b4" stroke-width="1"/><line x1="13" y1="701.8" x2="15" y2="701.8" stroke="#b4b4b4" stroke-width="1"/><line x1="11" y1="719.6" x2="15" y2="719.6" stroke="#b4b4b4" stroke-width="1"/><line x1="13" y1="737.3" x2="15" y2="737.3" stroke="#b4b4b4" stroke-width="1"/><line x1="9" y1="755.1" x2="15" y2="755.1" stroke="#b4b4b4" stroke-width="1"/><line x1="13" y1="772.8" x2="15" y2="772.8" stroke="#b4b4b4" stroke-width="1"/><line x1="11" y1="790.5" x2="15" y2="790.5" stroke="#b4b4b4" stroke-width="1"/><line x1="13" y1="808.3" x2="15" y2="808.3" stroke="#b4b4b4" stroke-width="1"/><line x1="0" y1="826.0" x2="15" y2="826.0" stroke="#b4b4b4" stroke-width="1"/><line x1="13" y1="843.7" x2="15" y2="843.7" stroke="#b4b4b4" stroke-width="1"/><line x1="11" y1="861.5" x2="15" y2="861.5" stroke="#b4b4b4" stroke-width="1"/><line x1="13" y1="879.2" x2="15" y2="879.2" stroke="#b4b4b4" stroke-width="1"/><line x1="9" y1="897.0" x2="15" y2="897.0" stroke="#b4b4b4" stroke-width="1"/><line x1="13" y1="914.7" x2="15" y2="914.7" stroke="#b4b4b4" stroke-width="1"/><line x1="11" y1="932.4" x2="15" y2="932.4" stroke="#b4b4b4" stroke-width="1"/><line x1="13" y1="950.2" x2="15" y2="950.2" stroke="#b4b4b4" stroke-width="1"/><line x1="0" y1="967.9" x2="15" y2="967.9" stroke="#b4b4b4" stroke-width="1"/><line x1="13" y1="985.6" x2="15" y2="985.6" stroke="#b4b4b4" stroke-width="1"/><line x1="11" y1="1003.4" x2="15" y2="1003.4" stroke="#b4b4b4" stroke-width="1"/><line x1="13" y1="1021.1" x2="15" y2="1021.1" stroke="#b4b4b4" stroke-width="1"/><line x1="9" y1="1038.8" x2="15" y2="1038.8" stroke="#b4b4b4" stroke-width="1"/><line x1="13" y1="1056.6" x2="15" y2="1056.6" stroke="#b4b4b4" stroke-width="1"/><line x1="11" y1="1074.3" x2="15" y2="1074.3" stroke="#b4b4b4" stroke-width="1"/><line x1="13" y1="1092.1" x2="15" y2="1092.1" stroke="#b4b4b4" stroke-width="1"/><line x1="0" y1="1109.8" x2="15" y2="1109.8" stroke="#b4b4b4" stroke-width="1"/><line x1="13" y1="1127.5" x2="15" y2="1127.5" stroke="#b4b4b4" stroke-width="1"/><line x1="11" y1="1145.3" x2="15" y2="1145.3" stroke="#b4b4b4" stroke-width="1"/><line x1="13" y1="1163.0" x2="15" y2="1163.0" stroke="#b4b4b4" stroke-width="1"/><line x1="9" y1="1180.8" x2="15" y2="1180.8" stroke="#b4b4b4" stroke-width="1"/><line x1="13" y1="1198.5" x2="15" y2="1198.5" stroke="#b4b4b4" stroke-width="1"/><line x1="11" y1="1216.2" x2="15" y2="1216.2" stroke="#b4b4b4" stroke-width="1"/></svg>
<div class="a t" style="left:52.5px;top:255.8px;font-size:9.5px;color:#f4f4f4">0</div>
<div class="a t" style="left:52.5px;top:397.7px;font-size:9.5px;color:#f4f4f4">1</div>
<div class="a t" style="left:52.5px;top:539.5999999999999px;font-size:9.5px;color:#f4f4f4">2</div>
<div class="a t" style="left:52.5px;top:681.5px;font-size:9.5px;color:#f4f4f4">3</div>
<div class="a t" style="left:52.5px;top:823.4px;font-size:9.5px;color:#f4f4f4">4</div>
<div class="a t" style="left:52.5px;top:965.3px;font-size:9.5px;color:#f4f4f4">5</div>
<div class="a t" style="left:52.5px;top:1107.2px;font-size:9.5px;color:#f4f4f4">6</div>
<div class="a t" style="left:52.5px;top:1249.1000000000001px;font-size:9.5px;color:#f4f4f4">7</div>
<svg class="a" style="left:51px;top:276.5px;" width="15" height="2" viewBox="0 0 15 2"><line x1="1" y1="1" x2="15" y2="1" stroke="#e8e8e8" stroke-width="1.2" stroke-dasharray="1.2,0.8"/></svg>
<div class="a" style="left:67px;top:138px;width:2448px;height:1220px;background:#5f5f5f"></div>
<div class="a" style="left:67px;top:138px;width:8px;height:1220px;background:#585858"></div>
<div class="a" style="left:75px;top:138px;width:1px;height:1220px;background:#777777"></div>
<div class="a" style="left:819px;top:254px;width:1421px;height:1104px;background:#000"></div>
<div class="a" style="left:820px;top:255px;width:709px;height:1103px;background:#fff"></div>
<div class="a" style="left:1530px;top:255px;width:708px;height:1103px;background:#fff"></div>
<div class="a" style="left:51px;top:1357px;width:2464px;height:1px;background:#4d4d4d"></div>
<div class="a" style="left:104px;top:1357px;width:87px;height:1px;background:#8a8a8a"></div>
<div class="a" style="left:890px;top:356px;width:540px;height:927px;border:1px solid #5b9bf6"></div>
<div class="a" style="left:1628px;top:356px;width:540px;height:927px;border:1px solid #5b9bf6"></div>
<div class="ln" id="L1" style="left:893.16px;top:382.41px;transform:scaleX(1.00797)">In<i> </i>the<i> </i>meantime,<i> </i>Deanna<i> </i>went<i> </i>looking<i> </i>in<i> </i>the<i> </i>other<i> </i>room.<i> </i></div>
<div class="ln" id="L2" style="left:891.52px;top:409.97px;transform:scaleX(0.98845)">She<i> </i>was<i> </i>curious<i> </i>about<i> </i>the<i> </i>clothes<i> </i>they<i> </i>had<i> </i>seen<i> </i>in<i> </i>the<i> </i>closet.<i> </i></div>
<div class="ln" id="L3" style="left:890.01px;top:437.53px;transform:scaleX(0.99063)">She<i> </i>didn’t<i> </i>dare<i> </i>take<i> </i>them<i> </i>out,<i> </i>but<i> </i>when<i> </i>she<i> </i>took<i> </i>a<i> </i>step<i> </i>back<i> </i></div>
<div class="ln" id="L4" style="left:891.00px;top:465.09px;transform:scaleX(0.99374)">she<i> </i>lost<i> </i>her<i> </i>balance<i> </i>and<i> </i>pushed<i> </i>the<i> </i>closet<i> </i>with<i> </i>her<i> </i>shoulder.<i> </i></div>
<div class="ln" id="L5" style="left:891.62px;top:492.64px;transform:scaleX(0.98534)">And<i> </i>the<i> </i>closet<i> </i>moved<i> </i>surprisingly<i> </i>easily.<i> </i>And<i> </i>then<i> </i>she<i> </i>saw<i> </i>the<i> </i></div>
<div class="ln" id="L6" style="left:891.00px;top:520.21px;transform:scaleX(0.99465)">mark<i> </i>on<i> </i>the<i> </i>floor.<i> </i>At<i> </i>the<i> </i>place<i> </i>of<i> </i>the<i> </i>closet<i> </i>there<i> </i>was<i> </i>no<i> </i>dust<i> </i></div>
<div class="ln" id="L7" style="left:891.01px;top:547.76px;transform:scaleX(0.98648)">on<i> </i>the<i> </i>hardwood<i> </i>floor<i> </i>and<i> </i>she<i> </i>saw<i> </i>a<i> </i>little<i> </i>hole<i> </i>in<i> </i>the<i> </i>wood.<b class="p">¶</b></div>
<div class="ln" id="L8" style="left:894.00px;top:575.33px;transform:scaleX(0.95203)">Alia,<i> </i>come<i> </i>quick!she<i> </i>cried<i> </i>excitedly.<b class="p">¶</b></div>
<div class="ln" id="L9" style="left:894.51px;top:602.88px;transform:scaleX(0.95193)">I’m<i> </i>coming,<i> </i>what’s<i> </i>wrong?<b class="p">¶</b></div>
<div class="ln" id="L10" style="left:896.93px;top:630.45px;transform:scaleX(0.98786)">I<i> </i>think<i> </i>a<i> </i>found<i> </i>the<i> </i>locket<i> </i>for<i> </i>our<i> </i>key.<b class="p">¶</b></div>
<div class="ln" id="L11" style="left:900.00px;top:658.00px;transform:scaleX(0.97968)">What??<i> </i>Where?<b class="p">¶</b></div>
<div class="ln" id="L12" style="left:901.06px;top:685.56px;transform:scaleX(0.93364)">Come,<i> </i>I’ll<i> </i>show<i> </i>you<i> </i>!<b class="p">¶</b></div>
<div class="ln" id="L13" style="left:903.84px;top:713.12px;transform:scaleX(0.99754)">Alia<i> </i>arrived<i> </i>in<i> </i>a<i> </i>hurry<i> </i>with<i> </i>the<i> </i>key<i> </i>in<i> </i>her<i> </i>right<i> </i>hand.<i> </i>She<i> </i></div>
<div class="ln" id="L14" style="left:903.80px;top:740.69px;transform:scaleX(0.98633)">gave<i> </i>it<i> </i>to<i> </i>Deanna<i> </i>who<i> </i>was<i> </i>already<i> </i>on<i> </i>her<i> </i>knees.<i> </i>She<i> </i>twisted<i> </i></div>
<div class="ln" id="L15" style="left:891.00px;top:768.25px;transform:scaleX(0.98557)">the<i> </i>key<i> </i>and<i> </i>a<i> </i>small<i> </i>piece<i> </i>of<i> </i>wood<i> </i>moved.<i> </i>Deanna<i> </i>put<i> </i>her<i> </i>hand<i> </i></div>
<div class="ln" id="L16" style="left:891.00px;top:795.80px;transform:scaleX(0.97436)">inside<i> </i>and<i> </i>she<i> </i>felt<i> </i>a<i> </i>little<i> </i>box<i> </i>that<i> </i>she<i> </i>pulled<i> </i>out.<b class="p">¶</b></div>
<div class="ln" id="L17" style="left:893.63px;top:823.37px;transform:scaleX(0.96209)">What<i> </i>is<i> </i>that<i> </i>?asked<i> </i>Alia.<b class="p">¶</b></div>
<div class="ln" id="L18" style="left:894.47px;top:850.93px;transform:scaleX(0.96831)">I<i> </i>don’t<i> </i>know,<i> </i>it<i> </i><i> </i>looks<i> </i>like<i> </i>a<i> </i>little<i> </i>jewelry<i> </i>box.<b class="p">¶</b></div>
<div class="ln" id="L19" style="left:897.83px;top:878.49px;transform:scaleX(0.92396)">Let’s<i> </i>open<i> </i>it.<b class="p">¶</b></div>
<div class="ln" id="L20" style="left:900.00px;top:906.04px;transform:scaleX(0.98252)">Wait!said<i> </i>Alia.Let’s<i> </i>just<i> </i>wait<i> </i>till<i> </i>later.<i> </i>Now<i> </i>let’s<i> </i>continue<i> </i>our<i> </i></div>
<div class="ln" id="L21" style="left:899.06px;top:933.61px;transform:scaleX(0.91815)">search.<b class="p">¶</b></div>
<div class="ln" id="L22" style="left:893.63px;top:961.16px;transform:scaleX(0.98480)">You’re<i> </i>right,<i> </i>we<i> </i>don’t<i> </i>know<i> </i>how<i> </i>much<i> </i>time<i> </i>we<i> </i>have<i> </i>before<i> </i></div>
<div class="ln" id="L23" style="left:893.81px;top:988.73px;transform:scaleX(0.96609)">Nanna<i> </i>gets<i> </i>home.<b class="p">¶</b></div>
<div class="ln" id="L24" style="left:893.80px;top:1016.28px;transform:scaleX(0.97449)">How<i> </i>long<i> </i>have<i> </i>we<i> </i>been<i> </i>up<i> </i>here?<b class="p">¶</b></div>
<div class="ln" id="L25" style="left:895.21px;top:1043.84px;transform:scaleX(0.98921)">About<i> </i>an<i> </i>hour,<i> </i>an<i> </i>hour<i> </i>and<i> </i>a<i> </i>half.<b class="p">¶</b></div>
<div class="ln" id="L26" style="left:896.88px;top:1071.40px;transform:scaleX(0.97661)">Let’s<i> </i>hurry.<i> </i>We<i> </i>still<i> </i>have<i> </i>packing<i> </i>to<i> </i>do.<b class="p">¶</b></div>
<div class="ln" id="L27" style="left:897.87px;top:1098.96px;transform:scaleX(0.97384)">So<i> </i>the<i> </i>ballroom<i> </i>is<i> </i>closed,<i> </i>the<i> </i>desks<i> </i>are<i> </i>closed,<i> </i>the<i> </i>closet<i> </i>is<i> </i>full<i> </i></div>
<div class="ln" id="L28" style="left:898.86px;top:1126.52px;transform:scaleX(0.94270)">of<i> </i>old<i> </i>clothes.<i> </i><b class="p">¶</b></div>
<div class="ln" id="L29" style="left:894.00px;top:1154.09px;transform:scaleX(0.98010)">Wait,<i> </i>what<i> </i>is<i> </i>that?asked<i> </i>Alia<i> </i>pulling<i> </i>out<i> </i>an<i> </i>ugly<i> </i>old<i> </i>dress.<b class="p">¶</b></div>
<div class="ln" id="L30" style="left:894.59px;top:1181.64px;transform:scaleX(0.95631)">Looks<i> </i>like<i> </i>a<i> </i>bag.<i> </i>Or<i> </i>a<i> </i>backpack.<i> </i>But<i> </i>really<i> </i>really<i> </i>old.<b class="p">¶</b></div>
<div class="ln" id="L31" style="left:897.02px;top:1209.20px;transform:scaleX(0.97765)">Let’s<i> </i>just<i> </i>take<i> </i>it<i> </i>and<i> </i>leave.<i> </i>We’ll<i> </i>have<i> </i>time<i> </i>to<i> </i>study<i> </i>everything<i> </i></div>
<div class="ln" id="L32" style="left:897.00px;top:1236.76px;transform:scaleX(0.94157)">later.<b class="p">¶</b></div>
<div class="ln" id="R0" style="left:1631.37px;top:354.85px;transform:scaleX(1.01283)">Fortunately,<i> </i>when<i> </i>they<i> </i>arrived<i> </i>to<i> </i>their<i> </i>room,<i> </i>they<i> </i>heard<i> </i>their<i> </i></div>
<div class="ln" id="R1" style="left:1631.37px;top:382.41px;transform:scaleX(1.01458)">grandmother<i> </i>opening<i> </i>the<i> </i>front<i> </i>door.<b class="p">¶</b></div>
<div class="ln" id="R2" style="left:1631.40px;top:409.97px;transform:scaleX(0.97177)">Girls,<i> </i>I’m<i> </i>home.<i> </i>Do<i> </i>you<i> </i>need<i> </i>any<i> </i>help<i> </i>with<i> </i>your<i> </i>packing?<b class="p">¶</b></div>
<div class="ln" id="R3" style="left:1632.89px;top:437.53px;transform:scaleX(0.97484)">No,<i> </i>Nanna,<i> </i>we’re<i> </i>almost<i> </i>done,<i> </i>lied<i> </i>Alia<i> </i>pulling<i> </i>her<i> </i>luggage<i> </i></div>
<div class="ln" id="R4" style="left:1632.88px;top:465.09px;transform:scaleX(0.98969)">from<i> </i>under<i> </i>her<i> </i>bed.<b class="p">¶</b></div>
<div class="ln" id="R5" style="left:1631.39px;top:492.64px;transform:scaleX(0.98060)">Great<i> </i>!<i> </i>As<i> </i>soon<i> </i>as<i> </i>you<i> </i>have<i> </i>finished<i> </i>we’re<i> </i>out<i> </i>of<i> </i>here.<i> </i>We<i> </i></div>
<div class="ln" id="R6" style="left:1631.37px;top:520.21px;transform:scaleX(0.97503)">have<i> </i>a<i> </i>bus<i> </i>in<i> </i><i> </i>two<i> </i>hours.<b class="p">¶</b></div>
<div class="ln" id="R7" style="left:1631.50px;top:547.76px;transform:scaleX(0.99959)">Two<i> </i>hours?<i> </i>I<i> </i>thought<i> </i>we<i> </i>left<i> </i>tomorrow,<i> </i>said<i> </i>Deanna.<i> </i>I<i> </i>don’t<i> </i></div>
<div class="ln" id="R8" style="left:1630.81px;top:575.33px;transform:scaleX(0.97025)">even<i> </i>have<i> </i>time<i> </i>to<i> </i>call<i> </i>my<i> </i>friends<i> </i>to<i> </i>say<i> </i>goodbye.<b class="p">¶</b></div>
<div class="ln" id="R9" style="left:1631.51px;top:602.88px;transform:scaleX(0.98677)">You<i> </i>shall<i> </i>do<i> </i>no<i> </i>such<i> </i>thing!said<i> </i>Nanna.<i> </i>Nobody<i> </i>must<i> </i>know<i> </i>we<i> </i></div>
<div class="ln" id="R10" style="left:1630.86px;top:630.45px;transform:scaleX(0.86741)">left.<b class="p">¶</b></div>
<div class="ln" id="R11" style="left:1631.46px;top:658.00px;transform:scaleX(0.91985)">Why<i> </i>?<b class="p">¶</b></div>
<div class="ln" id="R12" style="left:1632.89px;top:685.56px;transform:scaleX(0.95639)">Because<i> </i>we<i> </i>need<i> </i>to<i> </i>leave<i> </i>fast<i> </i>and<i> </i>silent.<i> </i>Is<i> </i>your<i> </i>luggage<i> </i>ready<i> </i>?<b class="p">¶</b></div>
<div class="ln" id="R13" style="left:1634.47px;top:713.12px;transform:scaleX(0.98770)">No,<i> </i>give<i> </i>us<i> </i>another<i> </i>hour.<b class="p">¶</b></div>
<div class="ln" id="R14" style="left:1636.93px;top:740.69px;transform:scaleX(0.82623)">Ok.<b class="p">¶</b></div>
<div class="ln" id="R15" style="left:1637.09px;top:768.25px;transform:scaleX(0.98576)">So<i> </i>the<i> </i>girls<i> </i>started<i> </i><i> </i>really<i> </i>to<i> </i>pack.<i> </i>Alia<i> </i>was<i> </i>wondering<i> </i>where<i> </i></div>
<div class="ln" id="R16" style="left:1638.08px;top:795.80px;transform:scaleX(0.97848)">she<i> </i>could<i> </i>put<i> </i>the<i> </i>map<i> </i>so<i> </i>Gloria<i> </i>couldn’t<i> </i>see<i> </i>it.<i> </i>She<i> </i>decided<i> </i>to<i> </i></div>
<div class="ln" id="R17" style="left:1628.21px;top:823.37px;transform:scaleX(0.99595)">take<i> </i>it<i> </i>out<i> </i>and<i> </i>fold<i> </i>it<i> </i>in<i> </i>four<i> </i>and<i> </i>put<i> </i>it<i> </i>in<i> </i>a<i> </i>book<i> </i>along<i> </i>with<i> </i>the<i> </i></div>
<div class="ln" id="R18" style="left:1629.08px;top:850.93px;transform:scaleX(0.98016)">white<i> </i>quill.<i> </i>She<i> </i>put<i> </i>the<i> </i>little<i> </i>box<i> </i>in<i> </i>a<i> </i>real<i> </i>jewelry<i> </i>box.<i> </i>The<i> </i>bag<i> </i></div>
<div class="ln" id="R19" style="left:1628.21px;top:878.49px;transform:scaleX(0.98213)">they<i> </i>had<i> </i>found<i> </i>upstairs<i> </i>was<i> </i>small<i> </i>enough<i> </i>to<i> </i>fit<i> </i>in<i> </i>her<i> </i>suitcase.<b class="p">¶</b></div>
<div class="ln" id="R20" style="left:1631.30px;top:906.04px;transform:scaleX(0.98851)">Deanna<i> </i>wasn’t<i> </i>sure<i> </i>what<i> </i>clothes<i> </i>to<i> </i>pack.<i> </i>In<i> </i>the<i> </i>end<i> </i>she<i> </i></div>
<div class="ln" id="R21" style="left:1630.83px;top:933.61px;transform:scaleX(0.99959)">realized<i> </i>that<i> </i>the<i> </i>least<i> </i>she<i> </i>was<i> </i>taking<i> </i>with<i> </i>her,<i> </i>the<i> </i>more<i> </i>her<i> </i></div>
<div class="ln" id="R22" style="left:1628.17px;top:961.16px;transform:scaleX(0.99181)">grandmother<i> </i>would<i> </i>have<i> </i>to<i> </i>buy<i> </i>for<i> </i>her<i> </i>in<i> </i>Paris.<i> </i>She<i> </i>didn’t<i> </i></div>
<div class="ln" id="R23" style="left:1628.21px;top:988.73px;transform:scaleX(0.97762)">mind<i> </i>the<i> </i>idea<i> </i>of<i> </i>shopping<i> </i>in<i> </i>Paris.<i> </i><b class="p">¶</b></div>
<div class="ln" id="R24" style="left:1631.49px;top:1016.28px;transform:scaleX(1.00469)">An<i> </i>hour<i> </i>later<i> </i>they<i> </i>both<i> </i>went<i> </i>downstairs<i> </i>with<i> </i>their<i> </i>small<i> </i></div>
<div class="ln" id="R25" style="left:1630.79px;top:1043.84px;transform:scaleX(0.99738)">suitcases.<i> </i>Their<i> </i>grandmother<i> </i>was<i> </i>happy<i> </i>that<i> </i>they<i> </i>had<i> </i>been<i> </i></div>
<div class="ln" id="R26" style="left:1628.37px;top:1071.40px;transform:scaleX(1.00149)">efficient.<i> </i>They<i> </i>went<i> </i>to<i> </i>the<i> </i>bus<i> </i>station,<i> </i>they<i> </i>got<i> </i>into<i> </i>the<i> </i>bus<i> </i></div>
<div class="ln" id="R27" style="left:1628.42px;top:1098.96px;transform:scaleX(0.97818)">and<i> </i>left<i> </i>without<i> </i>looking<i> </i>back.<b class="p">¶</b></div>
<svg class="a" style="left:0px;top:0px;pointer-events:none" width="2515" height="1358" viewBox="0 0 2515 1358"><g stroke="#5b9bf6" stroke-width="1.2" stroke-dasharray="1,3"><line x1="890" y1="295.5" x2="1430" y2="295.5"/><line x1="890" y1="311.5" x2="1430" y2="311.5"/><line x1="890.5" y1="295" x2="890.5" y2="312"/><line x1="1429.5" y1="295" x2="1429.5" y2="312"/><line x1="890" y1="1327.5" x2="1430" y2="1327.5"/><line x1="890" y1="1350.5" x2="1430" y2="1350.5"/><line x1="890.5" y1="1327" x2="890.5" y2="1351"/><line x1="1429.5" y1="1327" x2="1429.5" y2="1351"/><line x1="1628" y1="295.5" x2="2168" y2="295.5"/><line x1="1628" y1="311.5" x2="2168" y2="311.5"/><line x1="1628.5" y1="295" x2="1628.5" y2="312"/><line x1="2167.5" y1="295" x2="2167.5" y2="312"/><line x1="1628" y1="1327.5" x2="2168" y2="1327.5"/><line x1="1628" y1="1350.5" x2="2168" y2="1350.5"/><line x1="1628.5" y1="1327" x2="1628.5" y2="1351"/><line x1="2167.5" y1="1327" x2="2167.5" y2="1351"/></g></svg>
<svg class="a" style="left:0px;top:0px;" width="2515" height="1358" viewBox="0 0 2515 1358"><g fill="#4f92f6"><circle cx="893.7" cy="413.4" r="2.2"/><circle cx="906.6" cy="413.4" r="2.2"/><circle cx="919.5" cy="413.4" r="2.2"/><circle cx="932.4" cy="413.4" r="2.2"/><circle cx="945.2" cy="413.4" r="2.2"/><circle cx="958.1" cy="413.4" r="2.2"/><circle cx="971.0" cy="413.4" r="2.2"/><circle cx="983.9" cy="413.4" r="2.2"/><circle cx="996.8" cy="413.4" r="2.2"/><circle cx="1009.7" cy="413.4" r="2.2"/><circle cx="1022.6" cy="413.4" r="2.2"/><circle cx="1035.4" cy="413.4" r="2.2"/><circle cx="1048.3" cy="413.4" r="2.2"/><circle cx="1061.2" cy="413.4" r="2.2"/><circle cx="1074.1" cy="413.4" r="2.2"/><circle cx="1087.0" cy="413.4" r="2.2"/><circle cx="1099.9" cy="413.4" r="2.2"/><circle cx="1112.7" cy="413.4" r="2.2"/><circle cx="1125.6" cy="413.4" r="2.2"/><circle cx="1138.5" cy="413.4" r="2.2"/><circle cx="1151.4" cy="413.4" r="2.2"/><circle cx="894.1" cy="606.3" r="2.1"/><circle cx="906.1" cy="606.3" r="2.1"/><circle cx="919.1" cy="606.3" r="2.1"/><circle cx="895.0" cy="633.9" r="2.1"/><circle cx="907.9" cy="633.9" r="2.1"/><circle cx="921.2" cy="633.9" r="2.1"/><circle cx="896.8" cy="661.5" r="2.1"/><circle cx="909.7" cy="661.5" r="2.1"/><circle cx="899.0" cy="689.0" r="2.1"/><circle cx="912.4" cy="689.0" r="2.1"/><circle cx="925.3" cy="689.0" r="2.1"/><circle cx="900.8" cy="716.6" r="2.1"/><circle cx="914.2" cy="716.6" r="2.1"/><circle cx="926.8" cy="716.6" r="2.1"/><circle cx="903.0" cy="744.1" r="2.1"/><circle cx="915.7" cy="744.1" r="2.1"/><circle cx="894.1" cy="854.4" r="2.1"/><circle cx="906.1" cy="854.4" r="2.1"/><circle cx="919.1" cy="854.4" r="2.1"/><circle cx="894.6" cy="881.9" r="2.1"/><circle cx="907.9" cy="881.9" r="2.1"/><circle cx="921.2" cy="881.9" r="2.1"/><circle cx="896.8" cy="909.5" r="2.1"/><circle cx="910.2" cy="909.5" r="2.1"/><circle cx="899.0" cy="937.1" r="2.1"/><circle cx="912.4" cy="937.1" r="2.1"/><circle cx="894.6" cy="992.2" r="2.1"/><circle cx="906.8" cy="992.2" r="2.1"/><circle cx="919.1" cy="992.2" r="2.1"/><circle cx="894.6" cy="1047.3" r="2.1"/><circle cx="905.7" cy="1047.3" r="2.1"/><circle cx="895.0" cy="1074.9" r="2.1"/><circle cx="907.9" cy="1074.9" r="2.1"/><circle cx="896.6" cy="1102.4" r="2.1"/><circle cx="910.1" cy="1102.4" r="2.1"/><circle cx="899.0" cy="1130.0" r="2.1"/><circle cx="912.1" cy="1130.0" r="2.1"/><circle cx="925.0" cy="1130.0" r="2.1"/><circle cx="894.2" cy="1185.1" r="2.1"/><circle cx="906.2" cy="1185.1" r="2.1"/><circle cx="895.2" cy="1212.7" r="2.1"/><circle cx="908.0" cy="1212.7" r="2.1"/><circle cx="897.2" cy="1240.2" r="2.1"/><circle cx="910.1" cy="1240.2" r="2.1"/><circle cx="1630.9" cy="385.9" r="2.1"/><circle cx="1644.4" cy="385.9" r="2.1"/><circle cx="1630.9" cy="441.0" r="2.1"/><circle cx="1644.4" cy="441.0" r="2.1"/><circle cx="1632.4" cy="468.5" r="2.1"/><circle cx="1645.8" cy="468.5" r="2.1"/><circle cx="1630.9" cy="523.7" r="2.1"/><circle cx="1644.4" cy="523.7" r="2.1"/><circle cx="1630.5" cy="578.8" r="2.1"/><circle cx="1644.1" cy="578.8" r="2.1"/><circle cx="1630.5" cy="633.9" r="2.1"/><circle cx="1644.1" cy="633.9" r="2.1"/><circle cx="1630.5" cy="689.0" r="2.1"/><circle cx="1644.1" cy="689.0" r="2.1"/><circle cx="1632.7" cy="716.6" r="2.1"/><circle cx="1646.3" cy="716.6" r="2.1"/><circle cx="1635.0" cy="744.1" r="2.1"/><circle cx="1647.9" cy="744.1" r="2.1"/><circle cx="1636.6" cy="771.7" r="2.1"/><circle cx="1649.7" cy="771.7" r="2.1"/><circle cx="1662.9" cy="771.7" r="2.1"/><circle cx="1638.4" cy="799.3" r="2.1"/><circle cx="1652.0" cy="799.3" r="2.1"/><circle cx="1630.5" cy="937.1" r="2.1"/><circle cx="1644.1" cy="937.1" r="2.1"/><circle cx="1630.5" cy="1047.3" r="2.1"/><circle cx="1644.1" cy="1047.3" r="2.1"/></g></svg>
<div class="a t" style="left:999.5px;top:296.5px;font-family:'Liberation Serif';font-size:14px;color:#5b9bf6">»</div>
<div class="a t hd" id="H1" style="transform:scaleX(0.9927);transform-origin:0 0;left:1115.5px;top:294.1px;font-family:'Liberation Serif';font-weight:bold;font-size:17.5px;color:#4a4a4a">THE<i>·</i>GOLDEN<i>·</i>ONE<span class="hs">#</span></div>
<div class="a t hd" id="H2" style="transform:scaleX(0.980);transform-origin:0 0;left:1757px;top:294.1px;font-family:'Liberation Serif';font-weight:bold;font-size:17.5px;color:#4a4a4a">THE<i>·</i>CALM<i>·</i>BEFORE<i>·</i>THE<i>·</i>STORM<i>·</i><span class="hp">¶</span></div>
<div class="a t" style="left:1150.2px;top:1324.5px;font-family:'Liberation Serif';font-weight:bold;font-size:19.5px;color:#000">48<span class="hs2">#</span></div>
<div class="a t" style="left:1887.8px;top:1324.5px;font-family:'Liberation Serif';font-weight:bold;font-size:19.5px;color:#000">49<span class="hs2">#</span></div>
<div class="a t" style="left:888.5px;top:359px;font-family:'Liberation Serif';font-style:italic;font-weight:bold;font-size:15px;color:#5b9bf6">#</div>
<div class="a t" style="left:888.5px;top:356px;font-family:'Liberation Serif';font-weight:bold;font-size:19px;color:#5b9bf6">¶</div>
<div class="a t" style="left:1625.8px;top:1126px;font-family:'Liberation Serif';font-weight:bold;font-size:19px;color:#5b9bf6">¶</div>
<div class="a t" style="left:1625.5px;top:1155.5px;font-family:'Liberation Serif';font-style:italic;font-weight:bold;font-size:16.5px;color:#5b9bf6">#</div>
<div class="a" style="left:2253px;top:533px;width:244px;height:298px;background:#3d3d3d;border-radius:4px"></div>
<div class="a" style="left:2254px;top:534px;width:242px;height:13px;background:#3b3b3b;border-radius:3px 3px 0 0"></div>
<svg class="a" style="left:2463px;top:537px;" width="30" height="9" viewBox="0 0 30 9"><path d="M5.5 1.5l-3.5 2.5 3.5 2.5zM9.5 1.5l-3.5 2.5 3.5 2.5z" fill="#c8c8c8"/><path d="M21 1.2l5.5 5.6M26.5 1.2L21 6.8" stroke="#c8c8c8" stroke-width="1.8"/></svg>
<div class="a" style="left:2254px;top:547px;width:242px;height:27px;background:#424242"></div>
<div class="a" style="left:2254px;top:547px;width:118px;height:27px;background:#535353"></div>
<svg class="a" style="left:2262px;top:556px;" width="7" height="10" viewBox="0 0 7 10"><path d="M1 4l2.5-3 2.5 3M1 6l2.5 3 2.5-3" fill="none" stroke="#c8c8c8" stroke-width="1"/></svg>
<div class="a t" style="left:2272.8px;top:555.2px;font-size:11.5px;color:#f2f2f2;-webkit-text-stroke:0.25px #f2f2f2">Paragraph Styles</div>
<svg class="a" style="left:2478.5px;top:556px;" width="11" height="9" viewBox="0 0 11 9"><path d="M0 0.8h11M0 3.2h11M0 5.6h11M0 8h11" stroke="#c8c8c8" stroke-width="1"/></svg>
<div class="a" style="left:2254px;top:574px;width:242px;height:248px;background:#535353"></div>
<div class="a t" style="left:2260px;top:583px;font-size:10px;color:#f0f0f0">Opening Paragraph of Chapter</div>
<svg class="a" style="left:2445.5px;top:581px;" width="16" height="15" viewBox="0 0 16 15"><path d="M3.5 1H1v12.5h2.5M12 1h2.5v12.5H12" fill="none" stroke="#c8c8c8" stroke-width="1.1"/><path d="M7.8 3.5v7.5M4 7.3h7.5" stroke="#c8c8c8" stroke-width="1.6"/></svg>
<svg class="a" style="left:2474.5px;top:579.5px;" width="12" height="17" viewBox="0 0 12 17"><path d="M7.5 0.5L3.5 8.5h3.5L4.5 16.5l6-10H7.2L9.5 0.5z" fill="#c8c8c8"/></svg>
<div class="a" style="left:2256px;top:599px;width:238px;height:1px;background:#4a4a4a"></div>
<div class="a t" style="left:2290px;top:605.5px;font-size:10px;color:#f0f0f0">[Basic Paragraph]</div>
<div class="a" style="left:2256px;top:620px;width:238px;height:22px;background:#4c6686"></div>
<div class="a t" style="left:2290px;top:627.5px;font-size:10.3px;font-weight:bold;color:#ffffff">Opening Paragraph of Chapter</div>
<div class="a t" style="left:2290px;top:649.5px;font-size:10px;color:#f0f0f0">Body Paragraph</div>
<div class="a" style="left:2256px;top:664px;width:238px;height:1px;background:#4a4a4a"></div>
<div class="a" style="left:2256px;top:796px;width:238px;height:1px;background:#4a4a4a"></div>
<svg class="a" style="left:2258px;top:800px;" width="24" height="18" viewBox="0 0 24 18"><path d="M8 14.5c-2.3 0-3.5-1.6-3.5-3.2 0-1.7 1.3-3 3-3.1.4-2.4 2.4-4 4.6-4 2.4 0 4.3 1.7 4.7 4 1.6.2 2.8 1.5 2.8 3.1 0 1.8-1.4 3.2-3.2 3.2z" fill="#c8c8c8"/><path d="M1.5 13.3h6M5.5 11l2.5 2.3-2.5 2.3" fill="none" stroke="#c8c8c8" stroke-width="1.3"/></svg>
<svg class="a" style="left:2374px;top:802px;" width="15" height="13" viewBox="0 0 15 13"><path d="M0.5 2.5V1h5l1 1.5" fill="none" stroke="#c8c8c8" stroke-width="1"/><rect x="0" y="3" width="14" height="9.5" fill="#c8c8c8"/></svg>
<div class="a t" style="left:2401.5px;top:801.5px;font-size:13px;font-weight:bold;color:#8a8a8a">¶</div>
<svg class="a" style="left:2410px;top:802px;" width="9" height="10" viewBox="0 0 9 10"><path d="M1 9L8 2M4.5 1v4M2.5 3h4" stroke="#8a8a8a" stroke-width="1"/></svg>
<svg class="a" style="left:2432px;top:801.5px;" width="12" height="14" viewBox="0 0 12 14"><path d="M0 0h12v13H3.5v-3H0z" fill="#c8c8c8"/><path d="M0.5 10.5h3v3" fill="none" stroke="#535353" stroke-width="1"/></svg>
<svg class="a" style="left:2459px;top:801px;" width="13" height="15" viewBox="0 0 13 15"><path d="M0.5 2.8h12M4.5 2.5V1h4v1.5" fill="none" stroke="#c8c8c8" stroke-width="1.1"/><path d="M1.8 4v10.5h9.4V4" fill="none" stroke="#c8c8c8" stroke-width="1.2"/><path d="M4.5 5.5v7.5M6.5 5.5v7.5M8.5 5.5v7.5" stroke="#c8c8c8" stroke-width="1"/></svg>
<div class="a" style="left:2254px;top:821px;width:242px;height:1px;background:#2e2e2e"></div>
<div class="a" style="left:2254px;top:822px;width:242px;height:8px;background:#474747;border-radius:0 0 3px 3px"></div>
<svg class="a" style="left:2364px;top:824px;" width="22" height="4" viewBox="0 0 22 4"><rect x="0.0" y="0" width="1" height="4" fill="#353535"/><rect x="2.2" y="0" width="1" height="4" fill="#353535"/><rect x="4.4" y="0" width="1" height="4" fill="#353535"/><rect x="6.6" y="0" width="1" height="4" fill="#353535"/><rect x="8.8" y="0" width="1" height="4" fill="#353535"/><rect x="11.0" y="0" width="1" height="4" fill="#353535"/><rect x="13.2" y="0" width="1" height="4" fill="#353535"/><rect x="15.4" y="0" width="1" height="4" fill="#353535"/><rect x="17.6" y="0" width="1" height="4" fill="#353535"/><rect x="19.8" y="0" width="1" height="4" fill="#353535"/></svg>
</body></html>
